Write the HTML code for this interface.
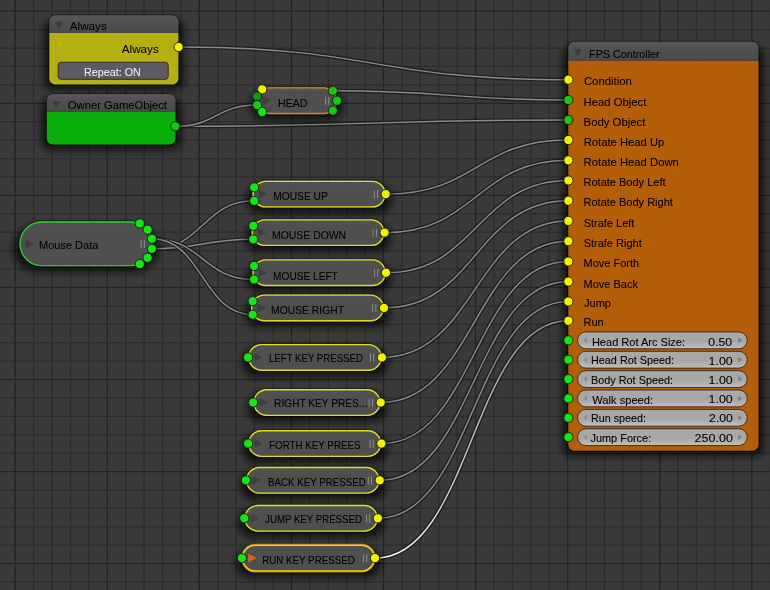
<!DOCTYPE html>
<html><head><meta charset="utf-8"><style>
html,body{margin:0;padding:0;background:#3a3a3a;width:770px;height:590px;overflow:hidden}
svg{display:block;will-change:transform}
text{font-family:"Liberation Sans", sans-serif}
</style></head><body>
<svg width="770" height="590" viewBox="0 0 770 590">
<defs>
<linearGradient id="runlink" gradientUnits="userSpaceOnUse" x1="375" y1="558.1" x2="568.4" y2="320.8"><stop offset="0" stop-color="#f4f4f4"/><stop offset="1" stop-color="#8e8e8e"/></linearGradient>
<linearGradient id="hg" x1="0" y1="0" x2="0" y2="1"><stop offset="0" stop-color="#585858"/><stop offset="1" stop-color="#4c4c4c"/></linearGradient>
<linearGradient id="fg" x1="0" y1="0" x2="0" y2="1"><stop offset="0" stop-color="#a9a9a9"/><stop offset="0.55" stop-color="#a7a7a7"/><stop offset="0.85" stop-color="#b6b6b6"/><stop offset="1" stop-color="#c4c4c4"/></linearGradient>
</defs>
<rect width="770" height="590" fill="#3a3a3a"/>
<path d="M33.61 0V590M52.03 0V590M70.44 0V590M88.86 0V590M125.69 0V590M144.1 0V590M162.52 0V590M180.93 0V590M217.76 0V590M236.18 0V590M254.59 0V590M273.01 0V590M309.84 0V590M328.25 0V590M346.67 0V590M365.08 0V590M401.91 0V590M420.33 0V590M438.74 0V590M457.16 0V590M493.99 0V590M512.4 0V590M530.82 0V590M549.24 0V590M586.07 0V590M604.48 0V590M622.89 0V590M641.31 0V590M678.14 0V590M696.56 0V590M714.97 0V590M733.38 0V590M770.22 0V590M0 29.61H770M0 48.03H770M0 66.44H770M0 84.86H770M0 121.69H770M0 140.1H770M0 158.52H770M0 176.93H770M0 213.76H770M0 232.18H770M0 250.59H770M0 269.01H770M0 305.84H770M0 324.25H770M0 342.67H770M0 361.08H770M0 397.91H770M0 416.33H770M0 434.74H770M0 453.16H770M0 489.99H770M0 508.4H770M0 526.82H770M0 545.24H770M0 582.07H770" stroke="#2c2c2c" stroke-width="1.25" fill="none"/>
<path d="M15.2 0V590M107.27 0V590M199.35 0V590M291.42 0V590M383.5 0V590M475.57 0V590M567.65 0V590M659.73 0V590M751.8 0V590M0 11.2H770M0 103.27H770M0 195.35H770M0 287.42H770M0 379.5H770M0 471.57H770M0 563.65H770" stroke="#242424" stroke-width="1.25" fill="none"/>
<path d="M178.6 47C373.5 47 373.5 79.7 568.4 79.7" stroke="#1c1c1c" stroke-width="4.2" fill="none" stroke-opacity="0.85"/><path d="M178.6 47C373.5 47 373.5 79.7 568.4 79.7" stroke="#8a8a8a" stroke-width="1.45" fill="none"/><path d="M332.9 90.8C450.65 90.8 450.65 100 568.4 100" stroke="#1c1c1c" stroke-width="4.2" fill="none" stroke-opacity="0.85"/><path d="M332.9 90.8C450.65 90.8 450.65 100 568.4 100" stroke="#8a8a8a" stroke-width="1.45" fill="none"/><path d="M175.4 126.3C371.9 126.3 371.9 120 568.4 120" stroke="#1c1c1c" stroke-width="4.2" fill="none" stroke-opacity="0.85"/><path d="M175.4 126.3C371.9 126.3 371.9 120 568.4 120" stroke="#8a8a8a" stroke-width="1.45" fill="none"/><path d="M175.4 126.3C216.27 126.3 216.27 105.03 257.14 105.03" stroke="#1c1c1c" stroke-width="4.2" fill="none" stroke-opacity="0.85"/><path d="M175.4 126.3C216.27 126.3 216.27 105.03 257.14 105.03" stroke="#8a8a8a" stroke-width="1.45" fill="none"/><path d="M385.7 194.1C477.05 194.1 477.05 140 568.4 140" stroke="#1c1c1c" stroke-width="4.2" fill="none" stroke-opacity="0.85"/><path d="M385.7 194.1C477.05 194.1 477.05 140 568.4 140" stroke="#8a8a8a" stroke-width="1.45" fill="none"/><path d="M384.6 232.6C476.5 232.6 476.5 160.3 568.4 160.3" stroke="#1c1c1c" stroke-width="4.2" fill="none" stroke-opacity="0.85"/><path d="M384.6 232.6C476.5 232.6 476.5 160.3 568.4 160.3" stroke="#8a8a8a" stroke-width="1.45" fill="none"/><path d="M386 272.7C477.2 272.7 477.2 180.5 568.4 180.5" stroke="#1c1c1c" stroke-width="4.2" fill="none" stroke-opacity="0.85"/><path d="M386 272.7C477.2 272.7 477.2 180.5 568.4 180.5" stroke="#8a8a8a" stroke-width="1.45" fill="none"/><path d="M384 307.9C476.2 307.9 476.2 200.7 568.4 200.7" stroke="#1c1c1c" stroke-width="4.2" fill="none" stroke-opacity="0.85"/><path d="M384 307.9C476.2 307.9 476.2 200.7 568.4 200.7" stroke="#8a8a8a" stroke-width="1.45" fill="none"/><path d="M381.9 357.4C475.15 357.4 475.15 220.9 568.4 220.9" stroke="#1c1c1c" stroke-width="4.2" fill="none" stroke-opacity="0.85"/><path d="M381.9 357.4C475.15 357.4 475.15 220.9 568.4 220.9" stroke="#8a8a8a" stroke-width="1.45" fill="none"/><path d="M380.7 402.5C474.55 402.5 474.55 241.2 568.4 241.2" stroke="#1c1c1c" stroke-width="4.2" fill="none" stroke-opacity="0.85"/><path d="M380.7 402.5C474.55 402.5 474.55 241.2 568.4 241.2" stroke="#8a8a8a" stroke-width="1.45" fill="none"/><path d="M381.4 443.55C474.9 443.55 474.9 261.5 568.4 261.5" stroke="#1c1c1c" stroke-width="4.2" fill="none" stroke-opacity="0.85"/><path d="M381.4 443.55C474.9 443.55 474.9 261.5 568.4 261.5" stroke="#8a8a8a" stroke-width="1.45" fill="none"/><path d="M379.7 480.3C474.05 480.3 474.05 281.6 568.4 281.6" stroke="#1c1c1c" stroke-width="4.2" fill="none" stroke-opacity="0.85"/><path d="M379.7 480.3C474.05 480.3 474.05 281.6 568.4 281.6" stroke="#8a8a8a" stroke-width="1.45" fill="none"/><path d="M377.9 518.3C473.15 518.3 473.15 301.5 568.4 301.5" stroke="#1c1c1c" stroke-width="4.2" fill="none" stroke-opacity="0.85"/><path d="M377.9 518.3C473.15 518.3 473.15 301.5 568.4 301.5" stroke="#8a8a8a" stroke-width="1.45" fill="none"/><path d="M375 558.1C471.7 558.1 471.7 320.8 568.4 320.8" stroke="#1c1c1c" stroke-width="4.2" fill="none" stroke-opacity="0.85"/><path d="M375 558.1C471.7 558.1 471.7 320.8 568.4 320.8" stroke="url(#runlink)" stroke-width="1.45" fill="none"/><path d="M151.94 248.76C203.07 248.76 203.07 200.85 254.21 200.85" stroke="#1c1c1c" stroke-width="4.2" fill="none" stroke-opacity="0.85"/><path d="M151.94 248.76C203.07 248.76 203.07 200.85 254.21 200.85" stroke="#8a8a8a" stroke-width="1.45" fill="none"/><path d="M151.94 248.76C202.62 248.76 202.62 239.35 253.31 239.35" stroke="#1c1c1c" stroke-width="4.2" fill="none" stroke-opacity="0.85"/><path d="M151.94 248.76C202.62 248.76 202.62 239.35 253.31 239.35" stroke="#8a8a8a" stroke-width="1.45" fill="none"/><path d="M151.94 238.74C203.02 238.74 203.02 279.45 254.11 279.45" stroke="#1c1c1c" stroke-width="4.2" fill="none" stroke-opacity="0.85"/><path d="M151.94 238.74C203.02 238.74 203.02 279.45 254.11 279.45" stroke="#8a8a8a" stroke-width="1.45" fill="none"/><path d="M151.94 238.74C202.32 238.74 202.32 314.65 252.71 314.65" stroke="#1c1c1c" stroke-width="4.2" fill="none" stroke-opacity="0.85"/><path d="M151.94 238.74C202.32 238.74 202.32 314.65 252.71 314.65" stroke="#8a8a8a" stroke-width="1.45" fill="none"/>
<path d="M55.3 12.1H172.4A19.2 19.2 0 0 1 191.6 31.3V78.5A19.2 19.2 0 0 1 172.4 97.7H55.3A19.2 19.2 0 0 1 36.1 78.5V31.3A19.2 19.2 0 0 1 55.3 12.1Z" fill="#000" fill-opacity="0.0102"/><path d="M55.3 13.2H172.4A18.1 18.1 0 0 1 190.5 31.3V78.5A18.1 18.1 0 0 1 172.4 96.6H55.3A18.1 18.1 0 0 1 37.2 78.5V31.3A18.1 18.1 0 0 1 55.3 13.2Z" fill="#000" fill-opacity="0.0204"/><path d="M55.3 14.3H172.4A17 17 0 0 1 189.4 31.3V78.5A17 17 0 0 1 172.4 95.5H55.3A17 17 0 0 1 38.3 78.5V31.3A17 17 0 0 1 55.3 14.3Z" fill="#000" fill-opacity="0.0306"/><path d="M55.3 15.4H172.4A15.9 15.9 0 0 1 188.3 31.3V78.5A15.9 15.9 0 0 1 172.4 94.4H55.3A15.9 15.9 0 0 1 39.4 78.5V31.3A15.9 15.9 0 0 1 55.3 15.4Z" fill="#000" fill-opacity="0.0408"/><path d="M55.3 16.5H172.4A14.8 14.8 0 0 1 187.2 31.3V78.5A14.8 14.8 0 0 1 172.4 93.3H55.3A14.8 14.8 0 0 1 40.5 78.5V31.3A14.8 14.8 0 0 1 55.3 16.5Z" fill="#000" fill-opacity="0.0510"/><path d="M55.3 17.6H172.4A13.7 13.7 0 0 1 186.1 31.3V78.5A13.7 13.7 0 0 1 172.4 92.2H55.3A13.7 13.7 0 0 1 41.6 78.5V31.3A13.7 13.7 0 0 1 55.3 17.6Z" fill="#000" fill-opacity="0.0612"/><path d="M55.3 18.7H172.4A12.6 12.6 0 0 1 185 31.3V78.5A12.6 12.6 0 0 1 172.4 91.1H55.3A12.6 12.6 0 0 1 42.7 78.5V31.3A12.6 12.6 0 0 1 55.3 18.7Z" fill="#000" fill-opacity="0.0714"/><path d="M55.3 19.8H172.4A11.5 11.5 0 0 1 183.9 31.3V78.5A11.5 11.5 0 0 1 172.4 90H55.3A11.5 11.5 0 0 1 43.8 78.5V31.3A11.5 11.5 0 0 1 55.3 19.8Z" fill="#000" fill-opacity="0.0816"/><path d="M55.3 20.9H172.4A10.4 10.4 0 0 1 182.8 31.3V78.5A10.4 10.4 0 0 1 172.4 88.9H55.3A10.4 10.4 0 0 1 44.9 78.5V31.3A10.4 10.4 0 0 1 55.3 20.9Z" fill="#000" fill-opacity="0.0918"/><path d="M55.3 22H172.4A9.3 9.3 0 0 1 181.7 31.3V78.5A9.3 9.3 0 0 1 172.4 87.8H55.3A9.3 9.3 0 0 1 46 78.5V31.3A9.3 9.3 0 0 1 55.3 22Z" fill="#000" fill-opacity="0.1020"/><path d="M55.3 23.1H172.4A8.2 8.2 0 0 1 180.6 31.3V78.5A8.2 8.2 0 0 1 172.4 86.7H55.3A8.2 8.2 0 0 1 47.1 78.5V31.3A8.2 8.2 0 0 1 55.3 23.1Z" fill="#000" fill-opacity="0.1122"/><path d="M55.3 24.2H172.4A7.1 7.1 0 0 1 179.5 31.3V78.5A7.1 7.1 0 0 1 172.4 85.6H55.3A7.1 7.1 0 0 1 48.2 78.5V31.3A7.1 7.1 0 0 1 55.3 24.2Z" fill="#000" fill-opacity="0.1224"/><path d="M55.3 14.8H172.4A6.5 6.5 0 0 1 178.9 21.3V78.5A6.5 6.5 0 0 1 172.4 85H55.3A6.5 6.5 0 0 1 48.8 78.5V21.3A6.5 6.5 0 0 1 55.3 14.8Z" fill="none" stroke="#000" stroke-opacity="0.39" stroke-width="1"/>
<path d="M49.3 32.8H178.4A0 0 0 0 1 178.4 32.8V78.5A6 6 0 0 1 172.4 84.5H55.3A6 6 0 0 1 49.3 78.5V32.8A0 0 0 0 1 49.3 32.8Z" fill="#bbb712" fill-opacity="0.96"/>
<path d="M55.3 15.3H172.4A6 6 0 0 1 178.4 21.3V32.8A0 0 0 0 1 178.4 32.8H49.3A0 0 0 0 1 49.3 32.8V21.3A6 6 0 0 1 55.3 15.3Z" fill="url(#hg)" fill-opacity="0.96"/>
<rect x="49.3" y="31.6" width="129.1" height="1" fill="#43494d" fill-opacity="0.9"/>
<path d="M54.9 21.8H62.9L58.9 29.8Z" fill="#3c3c3c"/>
<text x="69.83" y="30.00" fill="#000000" stroke="#000000" stroke-width="0.08" font-size="11" textLength="36.94" lengthAdjust="spacingAndGlyphs">Always</text><text x="121.83" y="52.55" fill="#000000" stroke="#000000" stroke-width="0.08" font-size="11" textLength="36.93" lengthAdjust="spacingAndGlyphs">Always</text><rect x="58.1" y="62.3" width="110.1" height="17" rx="3" fill="#5c5c60" stroke="#2e2e2e" stroke-width="1"/><text x="84.06" y="75.60" fill="#f2f2f2" stroke="#f2f2f2" stroke-width="0.05" font-size="11" textLength="56.85" lengthAdjust="spacingAndGlyphs">Repeat: ON</text><circle cx="178.6" cy="47" r="4.6" fill="#f2f200" stroke="#141414" stroke-width="1" stroke-opacity="0.85"/><path d="M52.8 90.8H169.5A19.2 19.2 0 0 1 188.7 110V138.4A19.2 19.2 0 0 1 169.5 157.6H52.8A19.2 19.2 0 0 1 33.6 138.4V110A19.2 19.2 0 0 1 52.8 90.8Z" fill="#000" fill-opacity="0.0102"/><path d="M52.8 91.9H169.5A18.1 18.1 0 0 1 187.6 110V138.4A18.1 18.1 0 0 1 169.5 156.5H52.8A18.1 18.1 0 0 1 34.7 138.4V110A18.1 18.1 0 0 1 52.8 91.9Z" fill="#000" fill-opacity="0.0204"/><path d="M52.8 93H169.5A17 17 0 0 1 186.5 110V138.4A17 17 0 0 1 169.5 155.4H52.8A17 17 0 0 1 35.8 138.4V110A17 17 0 0 1 52.8 93Z" fill="#000" fill-opacity="0.0306"/><path d="M52.8 94.1H169.5A15.9 15.9 0 0 1 185.4 110V138.4A15.9 15.9 0 0 1 169.5 154.3H52.8A15.9 15.9 0 0 1 36.9 138.4V110A15.9 15.9 0 0 1 52.8 94.1Z" fill="#000" fill-opacity="0.0408"/><path d="M52.8 95.2H169.5A14.8 14.8 0 0 1 184.3 110V138.4A14.8 14.8 0 0 1 169.5 153.2H52.8A14.8 14.8 0 0 1 38 138.4V110A14.8 14.8 0 0 1 52.8 95.2Z" fill="#000" fill-opacity="0.0510"/><path d="M52.8 96.3H169.5A13.7 13.7 0 0 1 183.2 110V138.4A13.7 13.7 0 0 1 169.5 152.1H52.8A13.7 13.7 0 0 1 39.1 138.4V110A13.7 13.7 0 0 1 52.8 96.3Z" fill="#000" fill-opacity="0.0612"/><path d="M52.8 97.4H169.5A12.6 12.6 0 0 1 182.1 110V138.4A12.6 12.6 0 0 1 169.5 151H52.8A12.6 12.6 0 0 1 40.2 138.4V110A12.6 12.6 0 0 1 52.8 97.4Z" fill="#000" fill-opacity="0.0714"/><path d="M52.8 98.5H169.5A11.5 11.5 0 0 1 181 110V138.4A11.5 11.5 0 0 1 169.5 149.9H52.8A11.5 11.5 0 0 1 41.3 138.4V110A11.5 11.5 0 0 1 52.8 98.5Z" fill="#000" fill-opacity="0.0816"/><path d="M52.8 99.6H169.5A10.4 10.4 0 0 1 179.9 110V138.4A10.4 10.4 0 0 1 169.5 148.8H52.8A10.4 10.4 0 0 1 42.4 138.4V110A10.4 10.4 0 0 1 52.8 99.6Z" fill="#000" fill-opacity="0.0918"/><path d="M52.8 100.7H169.5A9.3 9.3 0 0 1 178.8 110V138.4A9.3 9.3 0 0 1 169.5 147.7H52.8A9.3 9.3 0 0 1 43.5 138.4V110A9.3 9.3 0 0 1 52.8 100.7Z" fill="#000" fill-opacity="0.1020"/><path d="M52.8 101.8H169.5A8.2 8.2 0 0 1 177.7 110V138.4A8.2 8.2 0 0 1 169.5 146.6H52.8A8.2 8.2 0 0 1 44.6 138.4V110A8.2 8.2 0 0 1 52.8 101.8Z" fill="#000" fill-opacity="0.1122"/><path d="M52.8 102.9H169.5A7.1 7.1 0 0 1 176.6 110V138.4A7.1 7.1 0 0 1 169.5 145.5H52.8A7.1 7.1 0 0 1 45.7 138.4V110A7.1 7.1 0 0 1 52.8 102.9Z" fill="#000" fill-opacity="0.1224"/><path d="M52.8 93.5H169.5A6.5 6.5 0 0 1 176 100V138.4A6.5 6.5 0 0 1 169.5 144.9H52.8A6.5 6.5 0 0 1 46.3 138.4V100A6.5 6.5 0 0 1 52.8 93.5Z" fill="none" stroke="#000" stroke-opacity="0.39" stroke-width="1"/>
<path d="M46.8 111.4H175.5A0 0 0 0 1 175.5 111.4V138.4A6 6 0 0 1 169.5 144.4H52.8A6 6 0 0 1 46.8 138.4V111.4A0 0 0 0 1 46.8 111.4Z" fill="#0bb60b" fill-opacity="0.96"/>
<path d="M52.8 94H169.5A6 6 0 0 1 175.5 100V111.4A0 0 0 0 1 175.5 111.4H46.8A0 0 0 0 1 46.8 111.4V100A6 6 0 0 1 52.8 94Z" fill="url(#hg)" fill-opacity="0.96"/>
<rect x="46.8" y="110.2" width="128.7" height="1" fill="#43494d" fill-opacity="0.9"/>
<path d="M52.1 101H60.3L56.2 108.6Z" fill="#3c3c3c"/>
<text x="67.88" y="108.70" fill="#000000" stroke="#000000" stroke-width="0.08" font-size="11" textLength="99.09" lengthAdjust="spacingAndGlyphs">Owner GameObject</text><circle cx="175.4" cy="126.3" r="4.6" fill="#14c814" stroke="#141414" stroke-width="1" stroke-opacity="0.85"/>
<path d="M264.95 84H328.5A21.7 21.7 0 0 1 350.2 105.7V105.7A21.7 21.7 0 0 1 328.5 127.4H264.95A21.7 21.7 0 0 1 243.25 105.7V105.7A21.7 21.7 0 0 1 264.95 84Z" fill="#000" fill-opacity="0.0102"/><path d="M264.95 85.1H328.5A20.6 20.6 0 0 1 349.1 105.7V105.7A20.6 20.6 0 0 1 328.5 126.3H264.95A20.6 20.6 0 0 1 244.35 105.7V105.7A20.6 20.6 0 0 1 264.95 85.1Z" fill="#000" fill-opacity="0.0204"/><path d="M264.95 86.2H328.5A19.5 19.5 0 0 1 348 105.7V105.7A19.5 19.5 0 0 1 328.5 125.2H264.95A19.5 19.5 0 0 1 245.45 105.7V105.7A19.5 19.5 0 0 1 264.95 86.2Z" fill="#000" fill-opacity="0.0306"/><path d="M264.95 87.3H328.5A18.4 18.4 0 0 1 346.9 105.7V105.7A18.4 18.4 0 0 1 328.5 124.1H264.95A18.4 18.4 0 0 1 246.55 105.7V105.7A18.4 18.4 0 0 1 264.95 87.3Z" fill="#000" fill-opacity="0.0408"/><path d="M264.95 88.4H328.5A17.3 17.3 0 0 1 345.8 105.7V105.7A17.3 17.3 0 0 1 328.5 123H264.95A17.3 17.3 0 0 1 247.65 105.7V105.7A17.3 17.3 0 0 1 264.95 88.4Z" fill="#000" fill-opacity="0.0510"/><path d="M264.95 89.5H328.5A16.2 16.2 0 0 1 344.7 105.7V105.7A16.2 16.2 0 0 1 328.5 121.9H264.95A16.2 16.2 0 0 1 248.75 105.7V105.7A16.2 16.2 0 0 1 264.95 89.5Z" fill="#000" fill-opacity="0.0612"/><path d="M264.95 90.6H328.5A15.1 15.1 0 0 1 343.6 105.7V105.7A15.1 15.1 0 0 1 328.5 120.8H264.95A15.1 15.1 0 0 1 249.85 105.7V105.7A15.1 15.1 0 0 1 264.95 90.6Z" fill="#000" fill-opacity="0.0714"/><path d="M264.95 91.7H328.5A14 14 0 0 1 342.5 105.7V105.7A14 14 0 0 1 328.5 119.7H264.95A14 14 0 0 1 250.95 105.7V105.7A14 14 0 0 1 264.95 91.7Z" fill="#000" fill-opacity="0.0816"/><path d="M264.95 92.8H328.5A12.9 12.9 0 0 1 341.4 105.7V105.7A12.9 12.9 0 0 1 328.5 118.6H264.95A12.9 12.9 0 0 1 252.05 105.7V105.7A12.9 12.9 0 0 1 264.95 92.8Z" fill="#000" fill-opacity="0.0918"/><path d="M264.95 93.9H328.5A11.8 11.8 0 0 1 340.3 105.7V105.7A11.8 11.8 0 0 1 328.5 117.5H264.95A11.8 11.8 0 0 1 253.15 105.7V105.7A11.8 11.8 0 0 1 264.95 93.9Z" fill="#000" fill-opacity="0.1020"/><path d="M264.95 95H328.5A10.7 10.7 0 0 1 339.2 105.7V105.7A10.7 10.7 0 0 1 328.5 116.4H264.95A10.7 10.7 0 0 1 254.25 105.7V105.7A10.7 10.7 0 0 1 264.95 95Z" fill="#000" fill-opacity="0.1122"/><path d="M264.95 96.1H328.5A9.6 9.6 0 0 1 338.1 105.7V105.7A9.6 9.6 0 0 1 328.5 115.3H264.95A9.6 9.6 0 0 1 255.35 105.7V105.7A9.6 9.6 0 0 1 264.95 96.1Z" fill="#000" fill-opacity="0.1224"/><path d="M269.95 86.7H323.5A14 14 0 0 1 337.5 100.7V100.7A14 14 0 0 1 323.5 114.7H269.95A14 14 0 0 1 255.95 100.7V100.7A14 14 0 0 1 269.95 86.7Z" fill="none" stroke="#000" stroke-opacity="0.39" stroke-width="1"/>
<path d="M269.95 87.2H323.5A13.5 13.5 0 0 1 337 100.7V100.7A13.5 13.5 0 0 1 323.5 114.2H269.95A13.5 13.5 0 0 1 256.45 100.7V100.7A13.5 13.5 0 0 1 269.95 87.2Z" fill="#545454" fill-opacity="0.93"/>
<path d="M269.95 87.9H323.5A12.8 12.8 0 0 1 336.3 100.7V100.7A12.8 12.8 0 0 1 323.5 113.5H269.95A12.8 12.8 0 0 1 257.15 100.7V100.7A12.8 12.8 0 0 1 269.95 87.9Z" fill="none" stroke="#e0801e" stroke-width="1.35"/>
<path d="M262.75 96.2L271.25 100.7L262.75 105.2Z" fill="#3f3f3f"/>
<text x="278.12" y="106.80" fill="#000000" stroke="#000000" stroke-width="0.08" font-size="11" textLength="29.40" lengthAdjust="spacingAndGlyphs">HEAD</text>
<path d="M325.6 96.9V104.9M328.8 96.9V104.9" stroke="#8e8e8e" stroke-width="1"/>
<circle cx="262.22" cy="89.37" r="4.6" fill="#f2f200" stroke="#141414" stroke-width="1" stroke-opacity="0.85"/>
<circle cx="257.14" cy="96.37" r="4.6" fill="#0e9a0e" stroke="#141414" stroke-width="1" stroke-opacity="0.85"/>
<circle cx="257.14" cy="105.03" r="4.6" fill="#14c814" stroke="#141414" stroke-width="1" stroke-opacity="0.85"/>
<circle cx="262.22" cy="112.03" r="4.6" fill="#14e614" stroke="#141414" stroke-width="1" stroke-opacity="0.85"/>
<circle cx="332.9" cy="90.8" r="4.6" fill="#14c814" stroke="#141414" stroke-width="1" stroke-opacity="0.85"/>
<circle cx="337" cy="100.7" r="4.6" fill="#14c814" stroke="#141414" stroke-width="1" stroke-opacity="0.85"/>
<circle cx="332.9" cy="110.6" r="4.6" fill="#14c814" stroke="#141414" stroke-width="1" stroke-opacity="0.85"/><path d="M36.85 218.05H135A30.7 30.7 0 0 1 165.7 248.75V248.75A30.7 30.7 0 0 1 135 279.45H36.85A30.7 30.7 0 0 1 6.15 248.75V248.75A30.7 30.7 0 0 1 36.85 218.05Z" fill="#000" fill-opacity="0.0102"/><path d="M36.85 219.15H135A29.6 29.6 0 0 1 164.6 248.75V248.75A29.6 29.6 0 0 1 135 278.35H36.85A29.6 29.6 0 0 1 7.25 248.75V248.75A29.6 29.6 0 0 1 36.85 219.15Z" fill="#000" fill-opacity="0.0204"/><path d="M36.85 220.25H135A28.5 28.5 0 0 1 163.5 248.75V248.75A28.5 28.5 0 0 1 135 277.25H36.85A28.5 28.5 0 0 1 8.35 248.75V248.75A28.5 28.5 0 0 1 36.85 220.25Z" fill="#000" fill-opacity="0.0306"/><path d="M36.85 221.35H135A27.4 27.4 0 0 1 162.4 248.75V248.75A27.4 27.4 0 0 1 135 276.15H36.85A27.4 27.4 0 0 1 9.45 248.75V248.75A27.4 27.4 0 0 1 36.85 221.35Z" fill="#000" fill-opacity="0.0408"/><path d="M36.85 222.45H135A26.3 26.3 0 0 1 161.3 248.75V248.75A26.3 26.3 0 0 1 135 275.05H36.85A26.3 26.3 0 0 1 10.55 248.75V248.75A26.3 26.3 0 0 1 36.85 222.45Z" fill="#000" fill-opacity="0.0510"/><path d="M36.85 223.55H135A25.2 25.2 0 0 1 160.2 248.75V248.75A25.2 25.2 0 0 1 135 273.95H36.85A25.2 25.2 0 0 1 11.65 248.75V248.75A25.2 25.2 0 0 1 36.85 223.55Z" fill="#000" fill-opacity="0.0612"/><path d="M36.85 224.65H135A24.1 24.1 0 0 1 159.1 248.75V248.75A24.1 24.1 0 0 1 135 272.85H36.85A24.1 24.1 0 0 1 12.75 248.75V248.75A24.1 24.1 0 0 1 36.85 224.65Z" fill="#000" fill-opacity="0.0714"/><path d="M36.85 225.75H135A23 23 0 0 1 158 248.75V248.75A23 23 0 0 1 135 271.75H36.85A23 23 0 0 1 13.85 248.75V248.75A23 23 0 0 1 36.85 225.75Z" fill="#000" fill-opacity="0.0816"/><path d="M36.85 226.85H135A21.9 21.9 0 0 1 156.9 248.75V248.75A21.9 21.9 0 0 1 135 270.65H36.85A21.9 21.9 0 0 1 14.95 248.75V248.75A21.9 21.9 0 0 1 36.85 226.85Z" fill="#000" fill-opacity="0.0918"/><path d="M36.85 227.95H135A20.8 20.8 0 0 1 155.8 248.75V248.75A20.8 20.8 0 0 1 135 269.55H36.85A20.8 20.8 0 0 1 16.05 248.75V248.75A20.8 20.8 0 0 1 36.85 227.95Z" fill="#000" fill-opacity="0.1020"/><path d="M36.85 229.05H135A19.7 19.7 0 0 1 154.7 248.75V248.75A19.7 19.7 0 0 1 135 268.45H36.85A19.7 19.7 0 0 1 17.15 248.75V248.75A19.7 19.7 0 0 1 36.85 229.05Z" fill="#000" fill-opacity="0.1122"/><path d="M36.85 230.15H135A18.6 18.6 0 0 1 153.6 248.75V248.75A18.6 18.6 0 0 1 135 267.35H36.85A18.6 18.6 0 0 1 18.25 248.75V248.75A18.6 18.6 0 0 1 36.85 230.15Z" fill="#000" fill-opacity="0.1224"/><path d="M41.85 220.75H130A23 23 0 0 1 153 243.75V243.75A23 23 0 0 1 130 266.75H41.85A23 23 0 0 1 18.85 243.75V243.75A23 23 0 0 1 41.85 220.75Z" fill="none" stroke="#000" stroke-opacity="0.39" stroke-width="1"/>
<path d="M41.85 221.25H130A22.5 22.5 0 0 1 152.5 243.75V243.75A22.5 22.5 0 0 1 130 266.25H41.85A22.5 22.5 0 0 1 19.35 243.75V243.75A22.5 22.5 0 0 1 41.85 221.25Z" fill="#545454" fill-opacity="0.93"/>
<path d="M41.85 221.95H130A21.8 21.8 0 0 1 151.8 243.75V243.75A21.8 21.8 0 0 1 130 265.55H41.85A21.8 21.8 0 0 1 20.05 243.75V243.75A21.8 21.8 0 0 1 41.85 221.95Z" fill="none" stroke="#22cc22" stroke-width="1.35"/>
<path d="M25.65 239.25L34.15 243.75L25.65 248.25Z" fill="#3f3f3f"/>
<text x="38.96" y="249.45" fill="#000000" stroke="#000000" stroke-width="0.08" font-size="11" textLength="59.39" lengthAdjust="spacingAndGlyphs">Mouse Data</text>
<path d="M141.1 239.95V247.95M144.3 239.95V247.95" stroke="#8e8e8e" stroke-width="1"/>
<circle cx="139.76" cy="223.48" r="4.6" fill="#14e614" stroke="#141414" stroke-width="1" stroke-opacity="0.85"/>
<circle cx="147.59" cy="229.72" r="4.6" fill="#14e614" stroke="#141414" stroke-width="1" stroke-opacity="0.85"/>
<circle cx="151.94" cy="238.74" r="4.6" fill="#14e614" stroke="#141414" stroke-width="1" stroke-opacity="0.85"/>
<circle cx="151.94" cy="248.76" r="4.6" fill="#14e614" stroke="#141414" stroke-width="1" stroke-opacity="0.85"/>
<circle cx="147.59" cy="257.78" r="4.6" fill="#14e614" stroke="#141414" stroke-width="1" stroke-opacity="0.85"/>
<circle cx="139.76" cy="264.02" r="4.6" fill="#14e614" stroke="#141414" stroke-width="1" stroke-opacity="0.85"/><path d="M260.9 177.4H377.2A21.7 21.7 0 0 1 398.9 199.1V199.1A21.7 21.7 0 0 1 377.2 220.8H260.9A21.7 21.7 0 0 1 239.2 199.1V199.1A21.7 21.7 0 0 1 260.9 177.4Z" fill="#000" fill-opacity="0.0102"/><path d="M260.9 178.5H377.2A20.6 20.6 0 0 1 397.8 199.1V199.1A20.6 20.6 0 0 1 377.2 219.7H260.9A20.6 20.6 0 0 1 240.3 199.1V199.1A20.6 20.6 0 0 1 260.9 178.5Z" fill="#000" fill-opacity="0.0204"/><path d="M260.9 179.6H377.2A19.5 19.5 0 0 1 396.7 199.1V199.1A19.5 19.5 0 0 1 377.2 218.6H260.9A19.5 19.5 0 0 1 241.4 199.1V199.1A19.5 19.5 0 0 1 260.9 179.6Z" fill="#000" fill-opacity="0.0306"/><path d="M260.9 180.7H377.2A18.4 18.4 0 0 1 395.6 199.1V199.1A18.4 18.4 0 0 1 377.2 217.5H260.9A18.4 18.4 0 0 1 242.5 199.1V199.1A18.4 18.4 0 0 1 260.9 180.7Z" fill="#000" fill-opacity="0.0408"/><path d="M260.9 181.8H377.2A17.3 17.3 0 0 1 394.5 199.1V199.1A17.3 17.3 0 0 1 377.2 216.4H260.9A17.3 17.3 0 0 1 243.6 199.1V199.1A17.3 17.3 0 0 1 260.9 181.8Z" fill="#000" fill-opacity="0.0510"/><path d="M260.9 182.9H377.2A16.2 16.2 0 0 1 393.4 199.1V199.1A16.2 16.2 0 0 1 377.2 215.3H260.9A16.2 16.2 0 0 1 244.7 199.1V199.1A16.2 16.2 0 0 1 260.9 182.9Z" fill="#000" fill-opacity="0.0612"/><path d="M260.9 184H377.2A15.1 15.1 0 0 1 392.3 199.1V199.1A15.1 15.1 0 0 1 377.2 214.2H260.9A15.1 15.1 0 0 1 245.8 199.1V199.1A15.1 15.1 0 0 1 260.9 184Z" fill="#000" fill-opacity="0.0714"/><path d="M260.9 185.1H377.2A14 14 0 0 1 391.2 199.1V199.1A14 14 0 0 1 377.2 213.1H260.9A14 14 0 0 1 246.9 199.1V199.1A14 14 0 0 1 260.9 185.1Z" fill="#000" fill-opacity="0.0816"/><path d="M260.9 186.2H377.2A12.9 12.9 0 0 1 390.1 199.1V199.1A12.9 12.9 0 0 1 377.2 212H260.9A12.9 12.9 0 0 1 248 199.1V199.1A12.9 12.9 0 0 1 260.9 186.2Z" fill="#000" fill-opacity="0.0918"/><path d="M260.9 187.3H377.2A11.8 11.8 0 0 1 389 199.1V199.1A11.8 11.8 0 0 1 377.2 210.9H260.9A11.8 11.8 0 0 1 249.1 199.1V199.1A11.8 11.8 0 0 1 260.9 187.3Z" fill="#000" fill-opacity="0.1020"/><path d="M260.9 188.4H377.2A10.7 10.7 0 0 1 387.9 199.1V199.1A10.7 10.7 0 0 1 377.2 209.8H260.9A10.7 10.7 0 0 1 250.2 199.1V199.1A10.7 10.7 0 0 1 260.9 188.4Z" fill="#000" fill-opacity="0.1122"/><path d="M260.9 189.5H377.2A9.6 9.6 0 0 1 386.8 199.1V199.1A9.6 9.6 0 0 1 377.2 208.7H260.9A9.6 9.6 0 0 1 251.3 199.1V199.1A9.6 9.6 0 0 1 260.9 189.5Z" fill="#000" fill-opacity="0.1224"/><path d="M265.9 180.1H372.2A14 14 0 0 1 386.2 194.1V194.1A14 14 0 0 1 372.2 208.1H265.9A14 14 0 0 1 251.9 194.1V194.1A14 14 0 0 1 265.9 180.1Z" fill="none" stroke="#000" stroke-opacity="0.39" stroke-width="1"/>
<path d="M265.9 180.6H372.2A13.5 13.5 0 0 1 385.7 194.1V194.1A13.5 13.5 0 0 1 372.2 207.6H265.9A13.5 13.5 0 0 1 252.4 194.1V194.1A13.5 13.5 0 0 1 265.9 180.6Z" fill="#545454" fill-opacity="0.93"/>
<path d="M265.9 181.3H372.2A12.8 12.8 0 0 1 385 194.1V194.1A12.8 12.8 0 0 1 372.2 206.9H265.9A12.8 12.8 0 0 1 253.1 194.1V194.1A12.8 12.8 0 0 1 265.9 181.3Z" fill="none" stroke="#dede1e" stroke-width="1.35"/>
<path d="M258.7 189.6L267.2 194.1L258.7 198.6Z" fill="#3f3f3f"/>
<text x="273.25" y="199.50" fill="#000000" stroke="#000000" stroke-width="0.08" font-size="11" textLength="54.52" lengthAdjust="spacingAndGlyphs">MOUSE UP</text>
<path d="M374.3 190.3V198.3M377.5 190.3V198.3" stroke="#8e8e8e" stroke-width="1"/>
<circle cx="254.21" cy="187.35" r="4.6" fill="#14e614" stroke="#141414" stroke-width="1" stroke-opacity="0.85"/>
<circle cx="254.21" cy="200.85" r="4.6" fill="#14e614" stroke="#141414" stroke-width="1" stroke-opacity="0.85"/>
<circle cx="385.7" cy="194.1" r="4.6" fill="#f2f200" stroke="#141414" stroke-width="1" stroke-opacity="0.85"/><path d="M260 215.9H376.1A21.7 21.7 0 0 1 397.8 237.6V237.6A21.7 21.7 0 0 1 376.1 259.3H260A21.7 21.7 0 0 1 238.3 237.6V237.6A21.7 21.7 0 0 1 260 215.9Z" fill="#000" fill-opacity="0.0102"/><path d="M260 217H376.1A20.6 20.6 0 0 1 396.7 237.6V237.6A20.6 20.6 0 0 1 376.1 258.2H260A20.6 20.6 0 0 1 239.4 237.6V237.6A20.6 20.6 0 0 1 260 217Z" fill="#000" fill-opacity="0.0204"/><path d="M260 218.1H376.1A19.5 19.5 0 0 1 395.6 237.6V237.6A19.5 19.5 0 0 1 376.1 257.1H260A19.5 19.5 0 0 1 240.5 237.6V237.6A19.5 19.5 0 0 1 260 218.1Z" fill="#000" fill-opacity="0.0306"/><path d="M260 219.2H376.1A18.4 18.4 0 0 1 394.5 237.6V237.6A18.4 18.4 0 0 1 376.1 256H260A18.4 18.4 0 0 1 241.6 237.6V237.6A18.4 18.4 0 0 1 260 219.2Z" fill="#000" fill-opacity="0.0408"/><path d="M260 220.3H376.1A17.3 17.3 0 0 1 393.4 237.6V237.6A17.3 17.3 0 0 1 376.1 254.9H260A17.3 17.3 0 0 1 242.7 237.6V237.6A17.3 17.3 0 0 1 260 220.3Z" fill="#000" fill-opacity="0.0510"/><path d="M260 221.4H376.1A16.2 16.2 0 0 1 392.3 237.6V237.6A16.2 16.2 0 0 1 376.1 253.8H260A16.2 16.2 0 0 1 243.8 237.6V237.6A16.2 16.2 0 0 1 260 221.4Z" fill="#000" fill-opacity="0.0612"/><path d="M260 222.5H376.1A15.1 15.1 0 0 1 391.2 237.6V237.6A15.1 15.1 0 0 1 376.1 252.7H260A15.1 15.1 0 0 1 244.9 237.6V237.6A15.1 15.1 0 0 1 260 222.5Z" fill="#000" fill-opacity="0.0714"/><path d="M260 223.6H376.1A14 14 0 0 1 390.1 237.6V237.6A14 14 0 0 1 376.1 251.6H260A14 14 0 0 1 246 237.6V237.6A14 14 0 0 1 260 223.6Z" fill="#000" fill-opacity="0.0816"/><path d="M260 224.7H376.1A12.9 12.9 0 0 1 389 237.6V237.6A12.9 12.9 0 0 1 376.1 250.5H260A12.9 12.9 0 0 1 247.1 237.6V237.6A12.9 12.9 0 0 1 260 224.7Z" fill="#000" fill-opacity="0.0918"/><path d="M260 225.8H376.1A11.8 11.8 0 0 1 387.9 237.6V237.6A11.8 11.8 0 0 1 376.1 249.4H260A11.8 11.8 0 0 1 248.2 237.6V237.6A11.8 11.8 0 0 1 260 225.8Z" fill="#000" fill-opacity="0.1020"/><path d="M260 226.9H376.1A10.7 10.7 0 0 1 386.8 237.6V237.6A10.7 10.7 0 0 1 376.1 248.3H260A10.7 10.7 0 0 1 249.3 237.6V237.6A10.7 10.7 0 0 1 260 226.9Z" fill="#000" fill-opacity="0.1122"/><path d="M260 228H376.1A9.6 9.6 0 0 1 385.7 237.6V237.6A9.6 9.6 0 0 1 376.1 247.2H260A9.6 9.6 0 0 1 250.4 237.6V237.6A9.6 9.6 0 0 1 260 228Z" fill="#000" fill-opacity="0.1224"/><path d="M265 218.6H371.1A14 14 0 0 1 385.1 232.6V232.6A14 14 0 0 1 371.1 246.6H265A14 14 0 0 1 251 232.6V232.6A14 14 0 0 1 265 218.6Z" fill="none" stroke="#000" stroke-opacity="0.39" stroke-width="1"/>
<path d="M265 219.1H371.1A13.5 13.5 0 0 1 384.6 232.6V232.6A13.5 13.5 0 0 1 371.1 246.1H265A13.5 13.5 0 0 1 251.5 232.6V232.6A13.5 13.5 0 0 1 265 219.1Z" fill="#545454" fill-opacity="0.93"/>
<path d="M265 219.8H371.1A12.8 12.8 0 0 1 383.9 232.6V232.6A12.8 12.8 0 0 1 371.1 245.4H265A12.8 12.8 0 0 1 252.2 232.6V232.6A12.8 12.8 0 0 1 265 219.8Z" fill="none" stroke="#dede1e" stroke-width="1.35"/>
<path d="M257.8 228.1L266.3 232.6L257.8 237.1Z" fill="#3f3f3f"/>
<text x="272.10" y="238.70" fill="#000000" stroke="#000000" stroke-width="0.08" font-size="11" textLength="74.02" lengthAdjust="spacingAndGlyphs">MOUSE DOWN</text>
<path d="M373.2 228.8V236.8M376.4 228.8V236.8" stroke="#8e8e8e" stroke-width="1"/>
<circle cx="253.31" cy="225.85" r="4.6" fill="#14e614" stroke="#141414" stroke-width="1" stroke-opacity="0.85"/>
<circle cx="253.31" cy="239.35" r="4.6" fill="#14e614" stroke="#141414" stroke-width="1" stroke-opacity="0.85"/>
<circle cx="384.6" cy="232.6" r="4.6" fill="#f2f200" stroke="#141414" stroke-width="1" stroke-opacity="0.85"/><path d="M260.8 256H377.5A21.7 21.7 0 0 1 399.2 277.7V277.7A21.7 21.7 0 0 1 377.5 299.4H260.8A21.7 21.7 0 0 1 239.1 277.7V277.7A21.7 21.7 0 0 1 260.8 256Z" fill="#000" fill-opacity="0.0102"/><path d="M260.8 257.1H377.5A20.6 20.6 0 0 1 398.1 277.7V277.7A20.6 20.6 0 0 1 377.5 298.3H260.8A20.6 20.6 0 0 1 240.2 277.7V277.7A20.6 20.6 0 0 1 260.8 257.1Z" fill="#000" fill-opacity="0.0204"/><path d="M260.8 258.2H377.5A19.5 19.5 0 0 1 397 277.7V277.7A19.5 19.5 0 0 1 377.5 297.2H260.8A19.5 19.5 0 0 1 241.3 277.7V277.7A19.5 19.5 0 0 1 260.8 258.2Z" fill="#000" fill-opacity="0.0306"/><path d="M260.8 259.3H377.5A18.4 18.4 0 0 1 395.9 277.7V277.7A18.4 18.4 0 0 1 377.5 296.1H260.8A18.4 18.4 0 0 1 242.4 277.7V277.7A18.4 18.4 0 0 1 260.8 259.3Z" fill="#000" fill-opacity="0.0408"/><path d="M260.8 260.4H377.5A17.3 17.3 0 0 1 394.8 277.7V277.7A17.3 17.3 0 0 1 377.5 295H260.8A17.3 17.3 0 0 1 243.5 277.7V277.7A17.3 17.3 0 0 1 260.8 260.4Z" fill="#000" fill-opacity="0.0510"/><path d="M260.8 261.5H377.5A16.2 16.2 0 0 1 393.7 277.7V277.7A16.2 16.2 0 0 1 377.5 293.9H260.8A16.2 16.2 0 0 1 244.6 277.7V277.7A16.2 16.2 0 0 1 260.8 261.5Z" fill="#000" fill-opacity="0.0612"/><path d="M260.8 262.6H377.5A15.1 15.1 0 0 1 392.6 277.7V277.7A15.1 15.1 0 0 1 377.5 292.8H260.8A15.1 15.1 0 0 1 245.7 277.7V277.7A15.1 15.1 0 0 1 260.8 262.6Z" fill="#000" fill-opacity="0.0714"/><path d="M260.8 263.7H377.5A14 14 0 0 1 391.5 277.7V277.7A14 14 0 0 1 377.5 291.7H260.8A14 14 0 0 1 246.8 277.7V277.7A14 14 0 0 1 260.8 263.7Z" fill="#000" fill-opacity="0.0816"/><path d="M260.8 264.8H377.5A12.9 12.9 0 0 1 390.4 277.7V277.7A12.9 12.9 0 0 1 377.5 290.6H260.8A12.9 12.9 0 0 1 247.9 277.7V277.7A12.9 12.9 0 0 1 260.8 264.8Z" fill="#000" fill-opacity="0.0918"/><path d="M260.8 265.9H377.5A11.8 11.8 0 0 1 389.3 277.7V277.7A11.8 11.8 0 0 1 377.5 289.5H260.8A11.8 11.8 0 0 1 249 277.7V277.7A11.8 11.8 0 0 1 260.8 265.9Z" fill="#000" fill-opacity="0.1020"/><path d="M260.8 267H377.5A10.7 10.7 0 0 1 388.2 277.7V277.7A10.7 10.7 0 0 1 377.5 288.4H260.8A10.7 10.7 0 0 1 250.1 277.7V277.7A10.7 10.7 0 0 1 260.8 267Z" fill="#000" fill-opacity="0.1122"/><path d="M260.8 268.1H377.5A9.6 9.6 0 0 1 387.1 277.7V277.7A9.6 9.6 0 0 1 377.5 287.3H260.8A9.6 9.6 0 0 1 251.2 277.7V277.7A9.6 9.6 0 0 1 260.8 268.1Z" fill="#000" fill-opacity="0.1224"/><path d="M265.8 258.7H372.5A14 14 0 0 1 386.5 272.7V272.7A14 14 0 0 1 372.5 286.7H265.8A14 14 0 0 1 251.8 272.7V272.7A14 14 0 0 1 265.8 258.7Z" fill="none" stroke="#000" stroke-opacity="0.39" stroke-width="1"/>
<path d="M265.8 259.2H372.5A13.5 13.5 0 0 1 386 272.7V272.7A13.5 13.5 0 0 1 372.5 286.2H265.8A13.5 13.5 0 0 1 252.3 272.7V272.7A13.5 13.5 0 0 1 265.8 259.2Z" fill="#545454" fill-opacity="0.93"/>
<path d="M265.8 259.9H372.5A12.8 12.8 0 0 1 385.3 272.7V272.7A12.8 12.8 0 0 1 372.5 285.5H265.8A12.8 12.8 0 0 1 253 272.7V272.7A12.8 12.8 0 0 1 265.8 259.9Z" fill="none" stroke="#dede1e" stroke-width="1.35"/>
<path d="M258.6 268.2L267.1 272.7L258.6 277.2Z" fill="#3f3f3f"/>
<text x="273.07" y="279.60" fill="#000000" stroke="#000000" stroke-width="0.08" font-size="11" textLength="64.73" lengthAdjust="spacingAndGlyphs">MOUSE LEFT</text>
<path d="M374.6 268.9V276.9M377.8 268.9V276.9" stroke="#8e8e8e" stroke-width="1"/>
<circle cx="254.11" cy="265.95" r="4.6" fill="#14e614" stroke="#141414" stroke-width="1" stroke-opacity="0.85"/>
<circle cx="254.11" cy="279.45" r="4.6" fill="#14e614" stroke="#141414" stroke-width="1" stroke-opacity="0.85"/>
<circle cx="386" cy="272.7" r="4.6" fill="#f2f200" stroke="#141414" stroke-width="1" stroke-opacity="0.85"/><path d="M259.4 291.2H375.5A21.7 21.7 0 0 1 397.2 312.9V312.9A21.7 21.7 0 0 1 375.5 334.6H259.4A21.7 21.7 0 0 1 237.7 312.9V312.9A21.7 21.7 0 0 1 259.4 291.2Z" fill="#000" fill-opacity="0.0102"/><path d="M259.4 292.3H375.5A20.6 20.6 0 0 1 396.1 312.9V312.9A20.6 20.6 0 0 1 375.5 333.5H259.4A20.6 20.6 0 0 1 238.8 312.9V312.9A20.6 20.6 0 0 1 259.4 292.3Z" fill="#000" fill-opacity="0.0204"/><path d="M259.4 293.4H375.5A19.5 19.5 0 0 1 395 312.9V312.9A19.5 19.5 0 0 1 375.5 332.4H259.4A19.5 19.5 0 0 1 239.9 312.9V312.9A19.5 19.5 0 0 1 259.4 293.4Z" fill="#000" fill-opacity="0.0306"/><path d="M259.4 294.5H375.5A18.4 18.4 0 0 1 393.9 312.9V312.9A18.4 18.4 0 0 1 375.5 331.3H259.4A18.4 18.4 0 0 1 241 312.9V312.9A18.4 18.4 0 0 1 259.4 294.5Z" fill="#000" fill-opacity="0.0408"/><path d="M259.4 295.6H375.5A17.3 17.3 0 0 1 392.8 312.9V312.9A17.3 17.3 0 0 1 375.5 330.2H259.4A17.3 17.3 0 0 1 242.1 312.9V312.9A17.3 17.3 0 0 1 259.4 295.6Z" fill="#000" fill-opacity="0.0510"/><path d="M259.4 296.7H375.5A16.2 16.2 0 0 1 391.7 312.9V312.9A16.2 16.2 0 0 1 375.5 329.1H259.4A16.2 16.2 0 0 1 243.2 312.9V312.9A16.2 16.2 0 0 1 259.4 296.7Z" fill="#000" fill-opacity="0.0612"/><path d="M259.4 297.8H375.5A15.1 15.1 0 0 1 390.6 312.9V312.9A15.1 15.1 0 0 1 375.5 328H259.4A15.1 15.1 0 0 1 244.3 312.9V312.9A15.1 15.1 0 0 1 259.4 297.8Z" fill="#000" fill-opacity="0.0714"/><path d="M259.4 298.9H375.5A14 14 0 0 1 389.5 312.9V312.9A14 14 0 0 1 375.5 326.9H259.4A14 14 0 0 1 245.4 312.9V312.9A14 14 0 0 1 259.4 298.9Z" fill="#000" fill-opacity="0.0816"/><path d="M259.4 300H375.5A12.9 12.9 0 0 1 388.4 312.9V312.9A12.9 12.9 0 0 1 375.5 325.8H259.4A12.9 12.9 0 0 1 246.5 312.9V312.9A12.9 12.9 0 0 1 259.4 300Z" fill="#000" fill-opacity="0.0918"/><path d="M259.4 301.1H375.5A11.8 11.8 0 0 1 387.3 312.9V312.9A11.8 11.8 0 0 1 375.5 324.7H259.4A11.8 11.8 0 0 1 247.6 312.9V312.9A11.8 11.8 0 0 1 259.4 301.1Z" fill="#000" fill-opacity="0.1020"/><path d="M259.4 302.2H375.5A10.7 10.7 0 0 1 386.2 312.9V312.9A10.7 10.7 0 0 1 375.5 323.6H259.4A10.7 10.7 0 0 1 248.7 312.9V312.9A10.7 10.7 0 0 1 259.4 302.2Z" fill="#000" fill-opacity="0.1122"/><path d="M259.4 303.3H375.5A9.6 9.6 0 0 1 385.1 312.9V312.9A9.6 9.6 0 0 1 375.5 322.5H259.4A9.6 9.6 0 0 1 249.8 312.9V312.9A9.6 9.6 0 0 1 259.4 303.3Z" fill="#000" fill-opacity="0.1224"/><path d="M264.4 293.9H370.5A14 14 0 0 1 384.5 307.9V307.9A14 14 0 0 1 370.5 321.9H264.4A14 14 0 0 1 250.4 307.9V307.9A14 14 0 0 1 264.4 293.9Z" fill="none" stroke="#000" stroke-opacity="0.39" stroke-width="1"/>
<path d="M264.4 294.4H370.5A13.5 13.5 0 0 1 384 307.9V307.9A13.5 13.5 0 0 1 370.5 321.4H264.4A13.5 13.5 0 0 1 250.9 307.9V307.9A13.5 13.5 0 0 1 264.4 294.4Z" fill="#545454" fill-opacity="0.93"/>
<path d="M264.4 295.1H370.5A12.8 12.8 0 0 1 383.3 307.9V307.9A12.8 12.8 0 0 1 370.5 320.7H264.4A12.8 12.8 0 0 1 251.6 307.9V307.9A12.8 12.8 0 0 1 264.4 295.1Z" fill="none" stroke="#dede1e" stroke-width="1.35"/>
<path d="M257.2 303.4L265.7 307.9L257.2 312.4Z" fill="#3f3f3f"/>
<text x="271.04" y="313.70" fill="#000000" stroke="#000000" stroke-width="0.08" font-size="11" textLength="72.93" lengthAdjust="spacingAndGlyphs">MOUSE RIGHT</text>
<path d="M372.6 304.1V312.1M375.8 304.1V312.1" stroke="#8e8e8e" stroke-width="1"/>
<circle cx="252.71" cy="301.15" r="4.6" fill="#14e614" stroke="#141414" stroke-width="1" stroke-opacity="0.85"/>
<circle cx="252.71" cy="314.65" r="4.6" fill="#14e614" stroke="#141414" stroke-width="1" stroke-opacity="0.85"/>
<circle cx="384" cy="307.9" r="4.6" fill="#f2f200" stroke="#141414" stroke-width="1" stroke-opacity="0.85"/><path d="M256.6 340.7H373.4A21.7 21.7 0 0 1 395.1 362.4V362.4A21.7 21.7 0 0 1 373.4 384.1H256.6A21.7 21.7 0 0 1 234.9 362.4V362.4A21.7 21.7 0 0 1 256.6 340.7Z" fill="#000" fill-opacity="0.0102"/><path d="M256.6 341.8H373.4A20.6 20.6 0 0 1 394 362.4V362.4A20.6 20.6 0 0 1 373.4 383H256.6A20.6 20.6 0 0 1 236 362.4V362.4A20.6 20.6 0 0 1 256.6 341.8Z" fill="#000" fill-opacity="0.0204"/><path d="M256.6 342.9H373.4A19.5 19.5 0 0 1 392.9 362.4V362.4A19.5 19.5 0 0 1 373.4 381.9H256.6A19.5 19.5 0 0 1 237.1 362.4V362.4A19.5 19.5 0 0 1 256.6 342.9Z" fill="#000" fill-opacity="0.0306"/><path d="M256.6 344H373.4A18.4 18.4 0 0 1 391.8 362.4V362.4A18.4 18.4 0 0 1 373.4 380.8H256.6A18.4 18.4 0 0 1 238.2 362.4V362.4A18.4 18.4 0 0 1 256.6 344Z" fill="#000" fill-opacity="0.0408"/><path d="M256.6 345.1H373.4A17.3 17.3 0 0 1 390.7 362.4V362.4A17.3 17.3 0 0 1 373.4 379.7H256.6A17.3 17.3 0 0 1 239.3 362.4V362.4A17.3 17.3 0 0 1 256.6 345.1Z" fill="#000" fill-opacity="0.0510"/><path d="M256.6 346.2H373.4A16.2 16.2 0 0 1 389.6 362.4V362.4A16.2 16.2 0 0 1 373.4 378.6H256.6A16.2 16.2 0 0 1 240.4 362.4V362.4A16.2 16.2 0 0 1 256.6 346.2Z" fill="#000" fill-opacity="0.0612"/><path d="M256.6 347.3H373.4A15.1 15.1 0 0 1 388.5 362.4V362.4A15.1 15.1 0 0 1 373.4 377.5H256.6A15.1 15.1 0 0 1 241.5 362.4V362.4A15.1 15.1 0 0 1 256.6 347.3Z" fill="#000" fill-opacity="0.0714"/><path d="M256.6 348.4H373.4A14 14 0 0 1 387.4 362.4V362.4A14 14 0 0 1 373.4 376.4H256.6A14 14 0 0 1 242.6 362.4V362.4A14 14 0 0 1 256.6 348.4Z" fill="#000" fill-opacity="0.0816"/><path d="M256.6 349.5H373.4A12.9 12.9 0 0 1 386.3 362.4V362.4A12.9 12.9 0 0 1 373.4 375.3H256.6A12.9 12.9 0 0 1 243.7 362.4V362.4A12.9 12.9 0 0 1 256.6 349.5Z" fill="#000" fill-opacity="0.0918"/><path d="M256.6 350.6H373.4A11.8 11.8 0 0 1 385.2 362.4V362.4A11.8 11.8 0 0 1 373.4 374.2H256.6A11.8 11.8 0 0 1 244.8 362.4V362.4A11.8 11.8 0 0 1 256.6 350.6Z" fill="#000" fill-opacity="0.1020"/><path d="M256.6 351.7H373.4A10.7 10.7 0 0 1 384.1 362.4V362.4A10.7 10.7 0 0 1 373.4 373.1H256.6A10.7 10.7 0 0 1 245.9 362.4V362.4A10.7 10.7 0 0 1 256.6 351.7Z" fill="#000" fill-opacity="0.1122"/><path d="M256.6 352.8H373.4A9.6 9.6 0 0 1 383 362.4V362.4A9.6 9.6 0 0 1 373.4 372H256.6A9.6 9.6 0 0 1 247 362.4V362.4A9.6 9.6 0 0 1 256.6 352.8Z" fill="#000" fill-opacity="0.1224"/><path d="M261.6 343.4H368.4A14 14 0 0 1 382.4 357.4V357.4A14 14 0 0 1 368.4 371.4H261.6A14 14 0 0 1 247.6 357.4V357.4A14 14 0 0 1 261.6 343.4Z" fill="none" stroke="#000" stroke-opacity="0.39" stroke-width="1"/>
<path d="M261.6 343.9H368.4A13.5 13.5 0 0 1 381.9 357.4V357.4A13.5 13.5 0 0 1 368.4 370.9H261.6A13.5 13.5 0 0 1 248.1 357.4V357.4A13.5 13.5 0 0 1 261.6 343.9Z" fill="#545454" fill-opacity="0.93"/>
<path d="M261.6 344.6H368.4A12.8 12.8 0 0 1 381.2 357.4V357.4A12.8 12.8 0 0 1 368.4 370.2H261.6A12.8 12.8 0 0 1 248.8 357.4V357.4A12.8 12.8 0 0 1 261.6 344.6Z" fill="none" stroke="#dede1e" stroke-width="1.35"/>
<path d="M254.4 352.9L262.9 357.4L254.4 361.9Z" fill="#3f3f3f"/>
<text x="269.00" y="361.80" fill="#000000" stroke="#000000" stroke-width="0.08" font-size="11" textLength="93.87" lengthAdjust="spacingAndGlyphs">LEFT KEY PRESSED</text>
<path d="M370.5 353.6V361.6M373.7 353.6V361.6" stroke="#8e8e8e" stroke-width="1"/>
<circle cx="248.1" cy="357.4" r="4.6" fill="#14e614" stroke="#141414" stroke-width="1" stroke-opacity="0.85"/>
<circle cx="381.9" cy="357.4" r="4.6" fill="#f2f200" stroke="#141414" stroke-width="1" stroke-opacity="0.85"/><path d="M261.7 385.8H372.2A21.7 21.7 0 0 1 393.9 407.5V407.5A21.7 21.7 0 0 1 372.2 429.2H261.7A21.7 21.7 0 0 1 240 407.5V407.5A21.7 21.7 0 0 1 261.7 385.8Z" fill="#000" fill-opacity="0.0102"/><path d="M261.7 386.9H372.2A20.6 20.6 0 0 1 392.8 407.5V407.5A20.6 20.6 0 0 1 372.2 428.1H261.7A20.6 20.6 0 0 1 241.1 407.5V407.5A20.6 20.6 0 0 1 261.7 386.9Z" fill="#000" fill-opacity="0.0204"/><path d="M261.7 388H372.2A19.5 19.5 0 0 1 391.7 407.5V407.5A19.5 19.5 0 0 1 372.2 427H261.7A19.5 19.5 0 0 1 242.2 407.5V407.5A19.5 19.5 0 0 1 261.7 388Z" fill="#000" fill-opacity="0.0306"/><path d="M261.7 389.1H372.2A18.4 18.4 0 0 1 390.6 407.5V407.5A18.4 18.4 0 0 1 372.2 425.9H261.7A18.4 18.4 0 0 1 243.3 407.5V407.5A18.4 18.4 0 0 1 261.7 389.1Z" fill="#000" fill-opacity="0.0408"/><path d="M261.7 390.2H372.2A17.3 17.3 0 0 1 389.5 407.5V407.5A17.3 17.3 0 0 1 372.2 424.8H261.7A17.3 17.3 0 0 1 244.4 407.5V407.5A17.3 17.3 0 0 1 261.7 390.2Z" fill="#000" fill-opacity="0.0510"/><path d="M261.7 391.3H372.2A16.2 16.2 0 0 1 388.4 407.5V407.5A16.2 16.2 0 0 1 372.2 423.7H261.7A16.2 16.2 0 0 1 245.5 407.5V407.5A16.2 16.2 0 0 1 261.7 391.3Z" fill="#000" fill-opacity="0.0612"/><path d="M261.7 392.4H372.2A15.1 15.1 0 0 1 387.3 407.5V407.5A15.1 15.1 0 0 1 372.2 422.6H261.7A15.1 15.1 0 0 1 246.6 407.5V407.5A15.1 15.1 0 0 1 261.7 392.4Z" fill="#000" fill-opacity="0.0714"/><path d="M261.7 393.5H372.2A14 14 0 0 1 386.2 407.5V407.5A14 14 0 0 1 372.2 421.5H261.7A14 14 0 0 1 247.7 407.5V407.5A14 14 0 0 1 261.7 393.5Z" fill="#000" fill-opacity="0.0816"/><path d="M261.7 394.6H372.2A12.9 12.9 0 0 1 385.1 407.5V407.5A12.9 12.9 0 0 1 372.2 420.4H261.7A12.9 12.9 0 0 1 248.8 407.5V407.5A12.9 12.9 0 0 1 261.7 394.6Z" fill="#000" fill-opacity="0.0918"/><path d="M261.7 395.7H372.2A11.8 11.8 0 0 1 384 407.5V407.5A11.8 11.8 0 0 1 372.2 419.3H261.7A11.8 11.8 0 0 1 249.9 407.5V407.5A11.8 11.8 0 0 1 261.7 395.7Z" fill="#000" fill-opacity="0.1020"/><path d="M261.7 396.8H372.2A10.7 10.7 0 0 1 382.9 407.5V407.5A10.7 10.7 0 0 1 372.2 418.2H261.7A10.7 10.7 0 0 1 251 407.5V407.5A10.7 10.7 0 0 1 261.7 396.8Z" fill="#000" fill-opacity="0.1122"/><path d="M261.7 397.9H372.2A9.6 9.6 0 0 1 381.8 407.5V407.5A9.6 9.6 0 0 1 372.2 417.1H261.7A9.6 9.6 0 0 1 252.1 407.5V407.5A9.6 9.6 0 0 1 261.7 397.9Z" fill="#000" fill-opacity="0.1224"/><path d="M266.7 388.5H367.2A14 14 0 0 1 381.2 402.5V402.5A14 14 0 0 1 367.2 416.5H266.7A14 14 0 0 1 252.7 402.5V402.5A14 14 0 0 1 266.7 388.5Z" fill="none" stroke="#000" stroke-opacity="0.39" stroke-width="1"/>
<path d="M266.7 389H367.2A13.5 13.5 0 0 1 380.7 402.5V402.5A13.5 13.5 0 0 1 367.2 416H266.7A13.5 13.5 0 0 1 253.2 402.5V402.5A13.5 13.5 0 0 1 266.7 389Z" fill="#545454" fill-opacity="0.93"/>
<path d="M266.7 389.7H367.2A12.8 12.8 0 0 1 380 402.5V402.5A12.8 12.8 0 0 1 367.2 415.3H266.7A12.8 12.8 0 0 1 253.9 402.5V402.5A12.8 12.8 0 0 1 266.7 389.7Z" fill="none" stroke="#dede1e" stroke-width="1.35"/>
<path d="M259.5 398L268 402.5L259.5 407Z" fill="#3f3f3f"/>
<text x="274.11" y="406.70" fill="#000000" stroke="#000000" stroke-width="0.08" font-size="11" textLength="93.16" lengthAdjust="spacingAndGlyphs">RIGHT KEY PRES...</text>
<path d="M369.3 398.7V406.7M372.5 398.7V406.7" stroke="#8e8e8e" stroke-width="1"/>
<circle cx="253.2" cy="402.5" r="4.6" fill="#14e614" stroke="#141414" stroke-width="1" stroke-opacity="0.85"/>
<circle cx="380.7" cy="402.5" r="4.6" fill="#f2f200" stroke="#141414" stroke-width="1" stroke-opacity="0.85"/><path d="M256.6 426.85H372.9A21.7 21.7 0 0 1 394.6 448.55V448.55A21.7 21.7 0 0 1 372.9 470.25H256.6A21.7 21.7 0 0 1 234.9 448.55V448.55A21.7 21.7 0 0 1 256.6 426.85Z" fill="#000" fill-opacity="0.0102"/><path d="M256.6 427.95H372.9A20.6 20.6 0 0 1 393.5 448.55V448.55A20.6 20.6 0 0 1 372.9 469.15H256.6A20.6 20.6 0 0 1 236 448.55V448.55A20.6 20.6 0 0 1 256.6 427.95Z" fill="#000" fill-opacity="0.0204"/><path d="M256.6 429.05H372.9A19.5 19.5 0 0 1 392.4 448.55V448.55A19.5 19.5 0 0 1 372.9 468.05H256.6A19.5 19.5 0 0 1 237.1 448.55V448.55A19.5 19.5 0 0 1 256.6 429.05Z" fill="#000" fill-opacity="0.0306"/><path d="M256.6 430.15H372.9A18.4 18.4 0 0 1 391.3 448.55V448.55A18.4 18.4 0 0 1 372.9 466.95H256.6A18.4 18.4 0 0 1 238.2 448.55V448.55A18.4 18.4 0 0 1 256.6 430.15Z" fill="#000" fill-opacity="0.0408"/><path d="M256.6 431.25H372.9A17.3 17.3 0 0 1 390.2 448.55V448.55A17.3 17.3 0 0 1 372.9 465.85H256.6A17.3 17.3 0 0 1 239.3 448.55V448.55A17.3 17.3 0 0 1 256.6 431.25Z" fill="#000" fill-opacity="0.0510"/><path d="M256.6 432.35H372.9A16.2 16.2 0 0 1 389.1 448.55V448.55A16.2 16.2 0 0 1 372.9 464.75H256.6A16.2 16.2 0 0 1 240.4 448.55V448.55A16.2 16.2 0 0 1 256.6 432.35Z" fill="#000" fill-opacity="0.0612"/><path d="M256.6 433.45H372.9A15.1 15.1 0 0 1 388 448.55V448.55A15.1 15.1 0 0 1 372.9 463.65H256.6A15.1 15.1 0 0 1 241.5 448.55V448.55A15.1 15.1 0 0 1 256.6 433.45Z" fill="#000" fill-opacity="0.0714"/><path d="M256.6 434.55H372.9A14 14 0 0 1 386.9 448.55V448.55A14 14 0 0 1 372.9 462.55H256.6A14 14 0 0 1 242.6 448.55V448.55A14 14 0 0 1 256.6 434.55Z" fill="#000" fill-opacity="0.0816"/><path d="M256.6 435.65H372.9A12.9 12.9 0 0 1 385.8 448.55V448.55A12.9 12.9 0 0 1 372.9 461.45H256.6A12.9 12.9 0 0 1 243.7 448.55V448.55A12.9 12.9 0 0 1 256.6 435.65Z" fill="#000" fill-opacity="0.0918"/><path d="M256.6 436.75H372.9A11.8 11.8 0 0 1 384.7 448.55V448.55A11.8 11.8 0 0 1 372.9 460.35H256.6A11.8 11.8 0 0 1 244.8 448.55V448.55A11.8 11.8 0 0 1 256.6 436.75Z" fill="#000" fill-opacity="0.1020"/><path d="M256.6 437.85H372.9A10.7 10.7 0 0 1 383.6 448.55V448.55A10.7 10.7 0 0 1 372.9 459.25H256.6A10.7 10.7 0 0 1 245.9 448.55V448.55A10.7 10.7 0 0 1 256.6 437.85Z" fill="#000" fill-opacity="0.1122"/><path d="M256.6 438.95H372.9A9.6 9.6 0 0 1 382.5 448.55V448.55A9.6 9.6 0 0 1 372.9 458.15H256.6A9.6 9.6 0 0 1 247 448.55V448.55A9.6 9.6 0 0 1 256.6 438.95Z" fill="#000" fill-opacity="0.1224"/><path d="M261.6 429.55H367.9A14 14 0 0 1 381.9 443.55V443.55A14 14 0 0 1 367.9 457.55H261.6A14 14 0 0 1 247.6 443.55V443.55A14 14 0 0 1 261.6 429.55Z" fill="none" stroke="#000" stroke-opacity="0.39" stroke-width="1"/>
<path d="M261.6 430.05H367.9A13.5 13.5 0 0 1 381.4 443.55V443.55A13.5 13.5 0 0 1 367.9 457.05H261.6A13.5 13.5 0 0 1 248.1 443.55V443.55A13.5 13.5 0 0 1 261.6 430.05Z" fill="#545454" fill-opacity="0.93"/>
<path d="M261.6 430.75H367.9A12.8 12.8 0 0 1 380.7 443.55V443.55A12.8 12.8 0 0 1 367.9 456.35H261.6A12.8 12.8 0 0 1 248.8 443.55V443.55A12.8 12.8 0 0 1 261.6 430.75Z" fill="none" stroke="#dede1e" stroke-width="1.35"/>
<path d="M254.4 439.05L262.9 443.55L254.4 448.05Z" fill="#3f3f3f"/>
<text x="269.09" y="448.70" fill="#000000" stroke="#000000" stroke-width="0.08" font-size="11" textLength="91.41" lengthAdjust="spacingAndGlyphs">FORTH KEY PREES</text>
<path d="M370 439.75V447.75M373.2 439.75V447.75" stroke="#8e8e8e" stroke-width="1"/>
<circle cx="248.1" cy="443.55" r="4.6" fill="#14e614" stroke="#141414" stroke-width="1" stroke-opacity="0.85"/>
<circle cx="381.4" cy="443.55" r="4.6" fill="#f2f200" stroke="#141414" stroke-width="1" stroke-opacity="0.85"/><path d="M254.4 463.6H371.2A21.7 21.7 0 0 1 392.9 485.3V485.3A21.7 21.7 0 0 1 371.2 507H254.4A21.7 21.7 0 0 1 232.7 485.3V485.3A21.7 21.7 0 0 1 254.4 463.6Z" fill="#000" fill-opacity="0.0102"/><path d="M254.4 464.7H371.2A20.6 20.6 0 0 1 391.8 485.3V485.3A20.6 20.6 0 0 1 371.2 505.9H254.4A20.6 20.6 0 0 1 233.8 485.3V485.3A20.6 20.6 0 0 1 254.4 464.7Z" fill="#000" fill-opacity="0.0204"/><path d="M254.4 465.8H371.2A19.5 19.5 0 0 1 390.7 485.3V485.3A19.5 19.5 0 0 1 371.2 504.8H254.4A19.5 19.5 0 0 1 234.9 485.3V485.3A19.5 19.5 0 0 1 254.4 465.8Z" fill="#000" fill-opacity="0.0306"/><path d="M254.4 466.9H371.2A18.4 18.4 0 0 1 389.6 485.3V485.3A18.4 18.4 0 0 1 371.2 503.7H254.4A18.4 18.4 0 0 1 236 485.3V485.3A18.4 18.4 0 0 1 254.4 466.9Z" fill="#000" fill-opacity="0.0408"/><path d="M254.4 468H371.2A17.3 17.3 0 0 1 388.5 485.3V485.3A17.3 17.3 0 0 1 371.2 502.6H254.4A17.3 17.3 0 0 1 237.1 485.3V485.3A17.3 17.3 0 0 1 254.4 468Z" fill="#000" fill-opacity="0.0510"/><path d="M254.4 469.1H371.2A16.2 16.2 0 0 1 387.4 485.3V485.3A16.2 16.2 0 0 1 371.2 501.5H254.4A16.2 16.2 0 0 1 238.2 485.3V485.3A16.2 16.2 0 0 1 254.4 469.1Z" fill="#000" fill-opacity="0.0612"/><path d="M254.4 470.2H371.2A15.1 15.1 0 0 1 386.3 485.3V485.3A15.1 15.1 0 0 1 371.2 500.4H254.4A15.1 15.1 0 0 1 239.3 485.3V485.3A15.1 15.1 0 0 1 254.4 470.2Z" fill="#000" fill-opacity="0.0714"/><path d="M254.4 471.3H371.2A14 14 0 0 1 385.2 485.3V485.3A14 14 0 0 1 371.2 499.3H254.4A14 14 0 0 1 240.4 485.3V485.3A14 14 0 0 1 254.4 471.3Z" fill="#000" fill-opacity="0.0816"/><path d="M254.4 472.4H371.2A12.9 12.9 0 0 1 384.1 485.3V485.3A12.9 12.9 0 0 1 371.2 498.2H254.4A12.9 12.9 0 0 1 241.5 485.3V485.3A12.9 12.9 0 0 1 254.4 472.4Z" fill="#000" fill-opacity="0.0918"/><path d="M254.4 473.5H371.2A11.8 11.8 0 0 1 383 485.3V485.3A11.8 11.8 0 0 1 371.2 497.1H254.4A11.8 11.8 0 0 1 242.6 485.3V485.3A11.8 11.8 0 0 1 254.4 473.5Z" fill="#000" fill-opacity="0.1020"/><path d="M254.4 474.6H371.2A10.7 10.7 0 0 1 381.9 485.3V485.3A10.7 10.7 0 0 1 371.2 496H254.4A10.7 10.7 0 0 1 243.7 485.3V485.3A10.7 10.7 0 0 1 254.4 474.6Z" fill="#000" fill-opacity="0.1122"/><path d="M254.4 475.7H371.2A9.6 9.6 0 0 1 380.8 485.3V485.3A9.6 9.6 0 0 1 371.2 494.9H254.4A9.6 9.6 0 0 1 244.8 485.3V485.3A9.6 9.6 0 0 1 254.4 475.7Z" fill="#000" fill-opacity="0.1224"/><path d="M259.4 466.3H366.2A14 14 0 0 1 380.2 480.3V480.3A14 14 0 0 1 366.2 494.3H259.4A14 14 0 0 1 245.4 480.3V480.3A14 14 0 0 1 259.4 466.3Z" fill="none" stroke="#000" stroke-opacity="0.39" stroke-width="1"/>
<path d="M259.4 466.8H366.2A13.5 13.5 0 0 1 379.7 480.3V480.3A13.5 13.5 0 0 1 366.2 493.8H259.4A13.5 13.5 0 0 1 245.9 480.3V480.3A13.5 13.5 0 0 1 259.4 466.8Z" fill="#545454" fill-opacity="0.93"/>
<path d="M259.4 467.5H366.2A12.8 12.8 0 0 1 379 480.3V480.3A12.8 12.8 0 0 1 366.2 493.1H259.4A12.8 12.8 0 0 1 246.6 480.3V480.3A12.8 12.8 0 0 1 259.4 467.5Z" fill="none" stroke="#dede1e" stroke-width="1.35"/>
<path d="M252.2 475.8L260.7 480.3L252.2 484.8Z" fill="#3f3f3f"/>
<text x="268.09" y="485.70" fill="#000000" stroke="#000000" stroke-width="0.08" font-size="11" textLength="97.62" lengthAdjust="spacingAndGlyphs">BACK KEY PRESSED</text>
<path d="M368.3 476.5V484.5M371.5 476.5V484.5" stroke="#8e8e8e" stroke-width="1"/>
<circle cx="245.9" cy="480.3" r="4.6" fill="#14e614" stroke="#141414" stroke-width="1" stroke-opacity="0.85"/>
<circle cx="379.7" cy="480.3" r="4.6" fill="#f2f200" stroke="#141414" stroke-width="1" stroke-opacity="0.85"/><path d="M252.8 501.6H369.4A21.7 21.7 0 0 1 391.1 523.3V523.3A21.7 21.7 0 0 1 369.4 545H252.8A21.7 21.7 0 0 1 231.1 523.3V523.3A21.7 21.7 0 0 1 252.8 501.6Z" fill="#000" fill-opacity="0.0102"/><path d="M252.8 502.7H369.4A20.6 20.6 0 0 1 390 523.3V523.3A20.6 20.6 0 0 1 369.4 543.9H252.8A20.6 20.6 0 0 1 232.2 523.3V523.3A20.6 20.6 0 0 1 252.8 502.7Z" fill="#000" fill-opacity="0.0204"/><path d="M252.8 503.8H369.4A19.5 19.5 0 0 1 388.9 523.3V523.3A19.5 19.5 0 0 1 369.4 542.8H252.8A19.5 19.5 0 0 1 233.3 523.3V523.3A19.5 19.5 0 0 1 252.8 503.8Z" fill="#000" fill-opacity="0.0306"/><path d="M252.8 504.9H369.4A18.4 18.4 0 0 1 387.8 523.3V523.3A18.4 18.4 0 0 1 369.4 541.7H252.8A18.4 18.4 0 0 1 234.4 523.3V523.3A18.4 18.4 0 0 1 252.8 504.9Z" fill="#000" fill-opacity="0.0408"/><path d="M252.8 506H369.4A17.3 17.3 0 0 1 386.7 523.3V523.3A17.3 17.3 0 0 1 369.4 540.6H252.8A17.3 17.3 0 0 1 235.5 523.3V523.3A17.3 17.3 0 0 1 252.8 506Z" fill="#000" fill-opacity="0.0510"/><path d="M252.8 507.1H369.4A16.2 16.2 0 0 1 385.6 523.3V523.3A16.2 16.2 0 0 1 369.4 539.5H252.8A16.2 16.2 0 0 1 236.6 523.3V523.3A16.2 16.2 0 0 1 252.8 507.1Z" fill="#000" fill-opacity="0.0612"/><path d="M252.8 508.2H369.4A15.1 15.1 0 0 1 384.5 523.3V523.3A15.1 15.1 0 0 1 369.4 538.4H252.8A15.1 15.1 0 0 1 237.7 523.3V523.3A15.1 15.1 0 0 1 252.8 508.2Z" fill="#000" fill-opacity="0.0714"/><path d="M252.8 509.3H369.4A14 14 0 0 1 383.4 523.3V523.3A14 14 0 0 1 369.4 537.3H252.8A14 14 0 0 1 238.8 523.3V523.3A14 14 0 0 1 252.8 509.3Z" fill="#000" fill-opacity="0.0816"/><path d="M252.8 510.4H369.4A12.9 12.9 0 0 1 382.3 523.3V523.3A12.9 12.9 0 0 1 369.4 536.2H252.8A12.9 12.9 0 0 1 239.9 523.3V523.3A12.9 12.9 0 0 1 252.8 510.4Z" fill="#000" fill-opacity="0.0918"/><path d="M252.8 511.5H369.4A11.8 11.8 0 0 1 381.2 523.3V523.3A11.8 11.8 0 0 1 369.4 535.1H252.8A11.8 11.8 0 0 1 241 523.3V523.3A11.8 11.8 0 0 1 252.8 511.5Z" fill="#000" fill-opacity="0.1020"/><path d="M252.8 512.6H369.4A10.7 10.7 0 0 1 380.1 523.3V523.3A10.7 10.7 0 0 1 369.4 534H252.8A10.7 10.7 0 0 1 242.1 523.3V523.3A10.7 10.7 0 0 1 252.8 512.6Z" fill="#000" fill-opacity="0.1122"/><path d="M252.8 513.7H369.4A9.6 9.6 0 0 1 379 523.3V523.3A9.6 9.6 0 0 1 369.4 532.9H252.8A9.6 9.6 0 0 1 243.2 523.3V523.3A9.6 9.6 0 0 1 252.8 513.7Z" fill="#000" fill-opacity="0.1224"/><path d="M257.8 504.3H364.4A14 14 0 0 1 378.4 518.3V518.3A14 14 0 0 1 364.4 532.3H257.8A14 14 0 0 1 243.8 518.3V518.3A14 14 0 0 1 257.8 504.3Z" fill="none" stroke="#000" stroke-opacity="0.39" stroke-width="1"/>
<path d="M257.8 504.8H364.4A13.5 13.5 0 0 1 377.9 518.3V518.3A13.5 13.5 0 0 1 364.4 531.8H257.8A13.5 13.5 0 0 1 244.3 518.3V518.3A13.5 13.5 0 0 1 257.8 504.8Z" fill="#545454" fill-opacity="0.93"/>
<path d="M257.8 505.5H364.4A12.8 12.8 0 0 1 377.2 518.3V518.3A12.8 12.8 0 0 1 364.4 531.1H257.8A12.8 12.8 0 0 1 245 518.3V518.3A12.8 12.8 0 0 1 257.8 505.5Z" fill="none" stroke="#dede1e" stroke-width="1.35"/>
<path d="M250.6 513.8L259.1 518.3L250.6 522.8Z" fill="#3f3f3f"/>
<text x="265.10" y="522.85" fill="#000000" stroke="#000000" stroke-width="0.08" font-size="11" textLength="96.81" lengthAdjust="spacingAndGlyphs">JUMP KEY PRESSED</text>
<path d="M366.5 514.5V522.5M369.7 514.5V522.5" stroke="#8e8e8e" stroke-width="1"/>
<circle cx="244.3" cy="518.3" r="4.6" fill="#14e614" stroke="#141414" stroke-width="1" stroke-opacity="0.85"/>
<circle cx="377.9" cy="518.3" r="4.6" fill="#f2f200" stroke="#141414" stroke-width="1" stroke-opacity="0.85"/><path d="M250.4 541.4H366.5A21.7 21.7 0 0 1 388.2 563.1V563.1A21.7 21.7 0 0 1 366.5 584.8H250.4A21.7 21.7 0 0 1 228.7 563.1V563.1A21.7 21.7 0 0 1 250.4 541.4Z" fill="#000" fill-opacity="0.0102"/><path d="M250.4 542.5H366.5A20.6 20.6 0 0 1 387.1 563.1V563.1A20.6 20.6 0 0 1 366.5 583.7H250.4A20.6 20.6 0 0 1 229.8 563.1V563.1A20.6 20.6 0 0 1 250.4 542.5Z" fill="#000" fill-opacity="0.0204"/><path d="M250.4 543.6H366.5A19.5 19.5 0 0 1 386 563.1V563.1A19.5 19.5 0 0 1 366.5 582.6H250.4A19.5 19.5 0 0 1 230.9 563.1V563.1A19.5 19.5 0 0 1 250.4 543.6Z" fill="#000" fill-opacity="0.0306"/><path d="M250.4 544.7H366.5A18.4 18.4 0 0 1 384.9 563.1V563.1A18.4 18.4 0 0 1 366.5 581.5H250.4A18.4 18.4 0 0 1 232 563.1V563.1A18.4 18.4 0 0 1 250.4 544.7Z" fill="#000" fill-opacity="0.0408"/><path d="M250.4 545.8H366.5A17.3 17.3 0 0 1 383.8 563.1V563.1A17.3 17.3 0 0 1 366.5 580.4H250.4A17.3 17.3 0 0 1 233.1 563.1V563.1A17.3 17.3 0 0 1 250.4 545.8Z" fill="#000" fill-opacity="0.0510"/><path d="M250.4 546.9H366.5A16.2 16.2 0 0 1 382.7 563.1V563.1A16.2 16.2 0 0 1 366.5 579.3H250.4A16.2 16.2 0 0 1 234.2 563.1V563.1A16.2 16.2 0 0 1 250.4 546.9Z" fill="#000" fill-opacity="0.0612"/><path d="M250.4 548H366.5A15.1 15.1 0 0 1 381.6 563.1V563.1A15.1 15.1 0 0 1 366.5 578.2H250.4A15.1 15.1 0 0 1 235.3 563.1V563.1A15.1 15.1 0 0 1 250.4 548Z" fill="#000" fill-opacity="0.0714"/><path d="M250.4 549.1H366.5A14 14 0 0 1 380.5 563.1V563.1A14 14 0 0 1 366.5 577.1H250.4A14 14 0 0 1 236.4 563.1V563.1A14 14 0 0 1 250.4 549.1Z" fill="#000" fill-opacity="0.0816"/><path d="M250.4 550.2H366.5A12.9 12.9 0 0 1 379.4 563.1V563.1A12.9 12.9 0 0 1 366.5 576H250.4A12.9 12.9 0 0 1 237.5 563.1V563.1A12.9 12.9 0 0 1 250.4 550.2Z" fill="#000" fill-opacity="0.0918"/><path d="M250.4 551.3H366.5A11.8 11.8 0 0 1 378.3 563.1V563.1A11.8 11.8 0 0 1 366.5 574.9H250.4A11.8 11.8 0 0 1 238.6 563.1V563.1A11.8 11.8 0 0 1 250.4 551.3Z" fill="#000" fill-opacity="0.1020"/><path d="M250.4 552.4H366.5A10.7 10.7 0 0 1 377.2 563.1V563.1A10.7 10.7 0 0 1 366.5 573.8H250.4A10.7 10.7 0 0 1 239.7 563.1V563.1A10.7 10.7 0 0 1 250.4 552.4Z" fill="#000" fill-opacity="0.1122"/><path d="M250.4 553.5H366.5A9.6 9.6 0 0 1 376.1 563.1V563.1A9.6 9.6 0 0 1 366.5 572.7H250.4A9.6 9.6 0 0 1 240.8 563.1V563.1A9.6 9.6 0 0 1 250.4 553.5Z" fill="#000" fill-opacity="0.1224"/><path d="M255.4 544.1H361.5A14 14 0 0 1 375.5 558.1V558.1A14 14 0 0 1 361.5 572.1H255.4A14 14 0 0 1 241.4 558.1V558.1A14 14 0 0 1 255.4 544.1Z" fill="none" stroke="#000" stroke-opacity="0.39" stroke-width="1"/>
<path d="M255.4 544.6H361.5A13.5 13.5 0 0 1 375 558.1V558.1A13.5 13.5 0 0 1 361.5 571.6H255.4A13.5 13.5 0 0 1 241.9 558.1V558.1A13.5 13.5 0 0 1 255.4 544.6Z" fill="#545454" fill-opacity="0.93"/>
<path d="M255.4 544.6H361.5A13.5 13.5 0 0 1 375 558.1V558.1A13.5 13.5 0 0 1 361.5 571.6H255.4A13.5 13.5 0 0 1 241.9 558.1V558.1A13.5 13.5 0 0 1 255.4 544.6Z" fill="none" stroke="#d87a20" stroke-width="1.6"/>
<path d="M255.4 545.3H361.5A12.8 12.8 0 0 1 374.3 558.1V558.1A12.8 12.8 0 0 1 361.5 570.9H255.4A12.8 12.8 0 0 1 242.6 558.1V558.1A12.8 12.8 0 0 1 255.4 545.3Z" fill="none" stroke="#dede1e" stroke-width="1.35"/>
<path d="M248.2 553.6L256.7 558.1L248.2 562.6Z" fill="#d4651e"/>
<text x="262.21" y="563.70" fill="#000000" stroke="#000000" stroke-width="0.08" font-size="11" textLength="92.55" lengthAdjust="spacingAndGlyphs">RUN KEY PRESSED</text>
<path d="M363.6 554.3V562.3M366.8 554.3V562.3" stroke="#8e8e8e" stroke-width="1"/>
<circle cx="241.9" cy="558.1" r="4.6" fill="#14e614" stroke="#141414" stroke-width="1" stroke-opacity="0.85"/>
<circle cx="375" cy="558.1" r="4.6" fill="#f2f200" stroke="#141414" stroke-width="1" stroke-opacity="0.85"/>
<path d="M574.3 38.5H752.5A19.2 19.2 0 0 1 771.7 57.7V444.8A19.2 19.2 0 0 1 752.5 464H574.3A19.2 19.2 0 0 1 555.1 444.8V57.7A19.2 19.2 0 0 1 574.3 38.5Z" fill="#000" fill-opacity="0.0102"/><path d="M574.3 39.6H752.5A18.1 18.1 0 0 1 770.6 57.7V444.8A18.1 18.1 0 0 1 752.5 462.9H574.3A18.1 18.1 0 0 1 556.2 444.8V57.7A18.1 18.1 0 0 1 574.3 39.6Z" fill="#000" fill-opacity="0.0204"/><path d="M574.3 40.7H752.5A17 17 0 0 1 769.5 57.7V444.8A17 17 0 0 1 752.5 461.8H574.3A17 17 0 0 1 557.3 444.8V57.7A17 17 0 0 1 574.3 40.7Z" fill="#000" fill-opacity="0.0306"/><path d="M574.3 41.8H752.5A15.9 15.9 0 0 1 768.4 57.7V444.8A15.9 15.9 0 0 1 752.5 460.7H574.3A15.9 15.9 0 0 1 558.4 444.8V57.7A15.9 15.9 0 0 1 574.3 41.8Z" fill="#000" fill-opacity="0.0408"/><path d="M574.3 42.9H752.5A14.8 14.8 0 0 1 767.3 57.7V444.8A14.8 14.8 0 0 1 752.5 459.6H574.3A14.8 14.8 0 0 1 559.5 444.8V57.7A14.8 14.8 0 0 1 574.3 42.9Z" fill="#000" fill-opacity="0.0510"/><path d="M574.3 44H752.5A13.7 13.7 0 0 1 766.2 57.7V444.8A13.7 13.7 0 0 1 752.5 458.5H574.3A13.7 13.7 0 0 1 560.6 444.8V57.7A13.7 13.7 0 0 1 574.3 44Z" fill="#000" fill-opacity="0.0612"/><path d="M574.3 45.1H752.5A12.6 12.6 0 0 1 765.1 57.7V444.8A12.6 12.6 0 0 1 752.5 457.4H574.3A12.6 12.6 0 0 1 561.7 444.8V57.7A12.6 12.6 0 0 1 574.3 45.1Z" fill="#000" fill-opacity="0.0714"/><path d="M574.3 46.2H752.5A11.5 11.5 0 0 1 764 57.7V444.8A11.5 11.5 0 0 1 752.5 456.3H574.3A11.5 11.5 0 0 1 562.8 444.8V57.7A11.5 11.5 0 0 1 574.3 46.2Z" fill="#000" fill-opacity="0.0816"/><path d="M574.3 47.3H752.5A10.4 10.4 0 0 1 762.9 57.7V444.8A10.4 10.4 0 0 1 752.5 455.2H574.3A10.4 10.4 0 0 1 563.9 444.8V57.7A10.4 10.4 0 0 1 574.3 47.3Z" fill="#000" fill-opacity="0.0918"/><path d="M574.3 48.4H752.5A9.3 9.3 0 0 1 761.8 57.7V444.8A9.3 9.3 0 0 1 752.5 454.1H574.3A9.3 9.3 0 0 1 565 444.8V57.7A9.3 9.3 0 0 1 574.3 48.4Z" fill="#000" fill-opacity="0.1020"/><path d="M574.3 49.5H752.5A8.2 8.2 0 0 1 760.7 57.7V444.8A8.2 8.2 0 0 1 752.5 453H574.3A8.2 8.2 0 0 1 566.1 444.8V57.7A8.2 8.2 0 0 1 574.3 49.5Z" fill="#000" fill-opacity="0.1122"/><path d="M574.3 50.6H752.5A7.1 7.1 0 0 1 759.6 57.7V444.8A7.1 7.1 0 0 1 752.5 451.9H574.3A7.1 7.1 0 0 1 567.2 444.8V57.7A7.1 7.1 0 0 1 574.3 50.6Z" fill="#000" fill-opacity="0.1224"/><path d="M574.3 41.2H752.5A6.5 6.5 0 0 1 759 47.7V444.8A6.5 6.5 0 0 1 752.5 451.3H574.3A6.5 6.5 0 0 1 567.8 444.8V47.7A6.5 6.5 0 0 1 574.3 41.2Z" fill="none" stroke="#000" stroke-opacity="0.39" stroke-width="1"/>
<path d="M568.3 60.4H758.5A0 0 0 0 1 758.5 60.4V444.8A6 6 0 0 1 752.5 450.8H574.3A6 6 0 0 1 568.3 444.8V60.4A0 0 0 0 1 568.3 60.4Z" fill="#bb620a" fill-opacity="0.96"/>
<path d="M574.3 41.7H752.5A6 6 0 0 1 758.5 47.7V60.4A0 0 0 0 1 758.5 60.4H568.3A0 0 0 0 1 568.3 60.4V47.7A6 6 0 0 1 574.3 41.7Z" fill="url(#hg)" fill-opacity="0.96"/>
<rect x="568.3" y="59.2" width="190.2" height="1" fill="#43494d" fill-opacity="0.9"/>
<path d="M574.2 49H581.8L578 56.6Z" fill="#3c3c3c"/>
<text x="589.06" y="57.60" fill="#000000" stroke="#000000" stroke-width="0.08" font-size="11" textLength="70.65" lengthAdjust="spacingAndGlyphs">FPS Controller</text><text x="583.93" y="85.00" fill="#000000" stroke="#000000" stroke-width="0.08" font-size="11" textLength="47.96" lengthAdjust="spacingAndGlyphs">Condition</text><text x="583.62" y="105.70" fill="#000000" stroke="#000000" stroke-width="0.08" font-size="11" textLength="62.77" lengthAdjust="spacingAndGlyphs">Head Object</text><text x="583.59" y="125.60" fill="#000000" stroke="#000000" stroke-width="0.08" font-size="11" textLength="61.86" lengthAdjust="spacingAndGlyphs">Body Object</text><text x="583.67" y="145.60" fill="#000000" stroke="#000000" stroke-width="0.08" font-size="11" textLength="80.64" lengthAdjust="spacingAndGlyphs">Rotate Head Up</text><text x="583.64" y="165.70" fill="#000000" stroke="#000000" stroke-width="0.08" font-size="11" textLength="95.18" lengthAdjust="spacingAndGlyphs">Rotate Head Down</text><text x="583.55" y="186.10" fill="#000000" stroke="#000000" stroke-width="0.08" font-size="11">Rotate Body Left</text><text x="583.55" y="206.30" fill="#000000" stroke="#000000" stroke-width="0.08" font-size="11">Rotate Body Right</text><text x="583.65" y="226.50" fill="#000000" stroke="#000000" stroke-width="0.08" font-size="11">Strafe Left</text><text x="583.65" y="246.80" fill="#000000" stroke="#000000" stroke-width="0.08" font-size="11">Strafe Right</text><text x="583.55" y="267.10" fill="#000000" stroke="#000000" stroke-width="0.08" font-size="11">Move Forth</text><text x="583.55" y="287.70" fill="#000000" stroke="#000000" stroke-width="0.08" font-size="11">Move Back</text><text x="584.04" y="306.90" fill="#000000" stroke="#000000" stroke-width="0.08" font-size="11">Jump</text><text x="583.55" y="325.60" fill="#000000" stroke="#000000" stroke-width="0.08" font-size="11">Run</text><rect x="577.5" y="331.95" width="169.8" height="16.8" rx="8.4" fill="url(#fg)" stroke="#3a2612" stroke-width="0.9"/><path d="M587 337.55L583.5 340.35L587 343.15Z" fill="#8a8a8a"/><path d="M738.4 337.55L741.9 340.35L738.4 343.15Z" fill="#7a7a7a"/><text x="591.91" y="345.60" fill="#000000" stroke="#000000" stroke-width="0.08" font-size="11" textLength="93.15" lengthAdjust="spacingAndGlyphs">Head Rot Arc Size:</text><text x="708.26" y="345.80" fill="#000000" stroke="#000000" stroke-width="0.08" font-size="11" textLength="23.80" lengthAdjust="spacingAndGlyphs">0.50</text><rect x="577.5" y="351.31" width="169.8" height="16.8" rx="8.4" fill="url(#fg)" stroke="#3a2612" stroke-width="0.9"/><path d="M587 356.91L583.5 359.71L587 362.51Z" fill="#8a8a8a"/><path d="M738.4 356.91L741.9 359.71L738.4 362.51Z" fill="#7a7a7a"/><text x="590.96" y="364.40" fill="#000000" stroke="#000000" stroke-width="0.08" font-size="11" textLength="83.18" lengthAdjust="spacingAndGlyphs">Head Rot Speed:</text><text x="708.60" y="364.60" fill="#000000" stroke="#000000" stroke-width="0.08" font-size="11" textLength="24.04" lengthAdjust="spacingAndGlyphs">1.00</text><rect x="577.5" y="370.67" width="169.8" height="16.8" rx="8.4" fill="url(#fg)" stroke="#3a2612" stroke-width="0.9"/><path d="M587 376.27L583.5 379.07L587 381.87Z" fill="#8a8a8a"/><path d="M738.4 376.27L741.9 379.07L738.4 381.87Z" fill="#7a7a7a"/><text x="590.93" y="383.50" fill="#000000" stroke="#000000" stroke-width="0.08" font-size="11" textLength="82.20" lengthAdjust="spacingAndGlyphs">Body Rot Speed:</text><text x="708.60" y="383.60" fill="#000000" stroke="#000000" stroke-width="0.08" font-size="11" textLength="24.04" lengthAdjust="spacingAndGlyphs">1.00</text><rect x="577.5" y="390.03" width="169.8" height="16.8" rx="8.4" fill="url(#fg)" stroke="#3a2612" stroke-width="0.9"/><path d="M587 395.63L583.5 398.43L587 401.23Z" fill="#8a8a8a"/><path d="M738.4 395.63L741.9 398.43L738.4 401.23Z" fill="#7a7a7a"/><text x="592.29" y="403.60" fill="#000000" stroke="#000000" stroke-width="0.08" font-size="11" textLength="60.74" lengthAdjust="spacingAndGlyphs">Walk speed:</text><text x="708.60" y="403.40" fill="#000000" stroke="#000000" stroke-width="0.08" font-size="11" textLength="24.04" lengthAdjust="spacingAndGlyphs">1.00</text><rect x="577.5" y="409.39" width="169.8" height="16.8" rx="8.4" fill="url(#fg)" stroke="#3a2612" stroke-width="0.9"/><path d="M587 414.99L583.5 417.79L587 420.59Z" fill="#8a8a8a"/><path d="M738.4 414.99L741.9 417.79L738.4 420.59Z" fill="#7a7a7a"/><text x="590.97" y="422.40" fill="#000000" stroke="#000000" stroke-width="0.08" font-size="11" textLength="54.99" lengthAdjust="spacingAndGlyphs">Run speed:</text><text x="709.13" y="422.40" fill="#000000" stroke="#000000" stroke-width="0.08" font-size="11" textLength="23.76" lengthAdjust="spacingAndGlyphs">2.00</text><rect x="577.5" y="428.75" width="169.8" height="16.8" rx="8.4" fill="url(#fg)" stroke="#3a2612" stroke-width="0.9"/><path d="M587 434.35L583.5 437.15L587 439.95Z" fill="#8a8a8a"/><path d="M738.4 434.35L741.9 437.15L738.4 439.95Z" fill="#7a7a7a"/><text x="590.48" y="441.50" fill="#000000" stroke="#000000" stroke-width="0.08" font-size="11" textLength="60.74" lengthAdjust="spacingAndGlyphs">Jump Force:</text><text x="694.63" y="441.50" fill="#000000" stroke="#000000" stroke-width="0.08" font-size="11" textLength="38.30" lengthAdjust="spacingAndGlyphs">250.00</text><circle cx="568.4" cy="79.7" r="4.6" fill="#f2f200" stroke="#141414" stroke-width="1" stroke-opacity="0.85"/><circle cx="568.4" cy="100" r="4.6" fill="#14c814" stroke="#141414" stroke-width="1" stroke-opacity="0.85"/><circle cx="568.4" cy="120" r="4.6" fill="#14c814" stroke="#141414" stroke-width="1" stroke-opacity="0.85"/><circle cx="568.4" cy="140" r="4.6" fill="#f2f200" stroke="#141414" stroke-width="1" stroke-opacity="0.85"/><circle cx="568.4" cy="160.3" r="4.6" fill="#f2f200" stroke="#141414" stroke-width="1" stroke-opacity="0.85"/><circle cx="568.4" cy="180.5" r="4.6" fill="#f2f200" stroke="#141414" stroke-width="1" stroke-opacity="0.85"/><circle cx="568.4" cy="200.7" r="4.6" fill="#f2f200" stroke="#141414" stroke-width="1" stroke-opacity="0.85"/><circle cx="568.4" cy="220.9" r="4.6" fill="#f2f200" stroke="#141414" stroke-width="1" stroke-opacity="0.85"/><circle cx="568.4" cy="241.2" r="4.6" fill="#f2f200" stroke="#141414" stroke-width="1" stroke-opacity="0.85"/><circle cx="568.4" cy="261.5" r="4.6" fill="#f2f200" stroke="#141414" stroke-width="1" stroke-opacity="0.85"/><circle cx="568.4" cy="281.6" r="4.6" fill="#f2f200" stroke="#141414" stroke-width="1" stroke-opacity="0.85"/><circle cx="568.4" cy="301.5" r="4.6" fill="#f2f200" stroke="#141414" stroke-width="1" stroke-opacity="0.85"/><circle cx="568.4" cy="320.8" r="4.6" fill="#f2f200" stroke="#141414" stroke-width="1" stroke-opacity="0.85"/><circle cx="568.4" cy="340.35" r="4.6" fill="#14e614" stroke="#141414" stroke-width="1" stroke-opacity="0.85"/><circle cx="568.4" cy="359.71" r="4.6" fill="#14e614" stroke="#141414" stroke-width="1" stroke-opacity="0.85"/><circle cx="568.4" cy="379.07" r="4.6" fill="#14e614" stroke="#141414" stroke-width="1" stroke-opacity="0.85"/><circle cx="568.4" cy="398.43" r="4.6" fill="#14e614" stroke="#141414" stroke-width="1" stroke-opacity="0.85"/><circle cx="568.4" cy="417.79" r="4.6" fill="#14e614" stroke="#141414" stroke-width="1" stroke-opacity="0.85"/><circle cx="568.4" cy="437.15" r="4.6" fill="#14e614" stroke="#141414" stroke-width="1" stroke-opacity="0.85"/>
</svg>
</body></html>
